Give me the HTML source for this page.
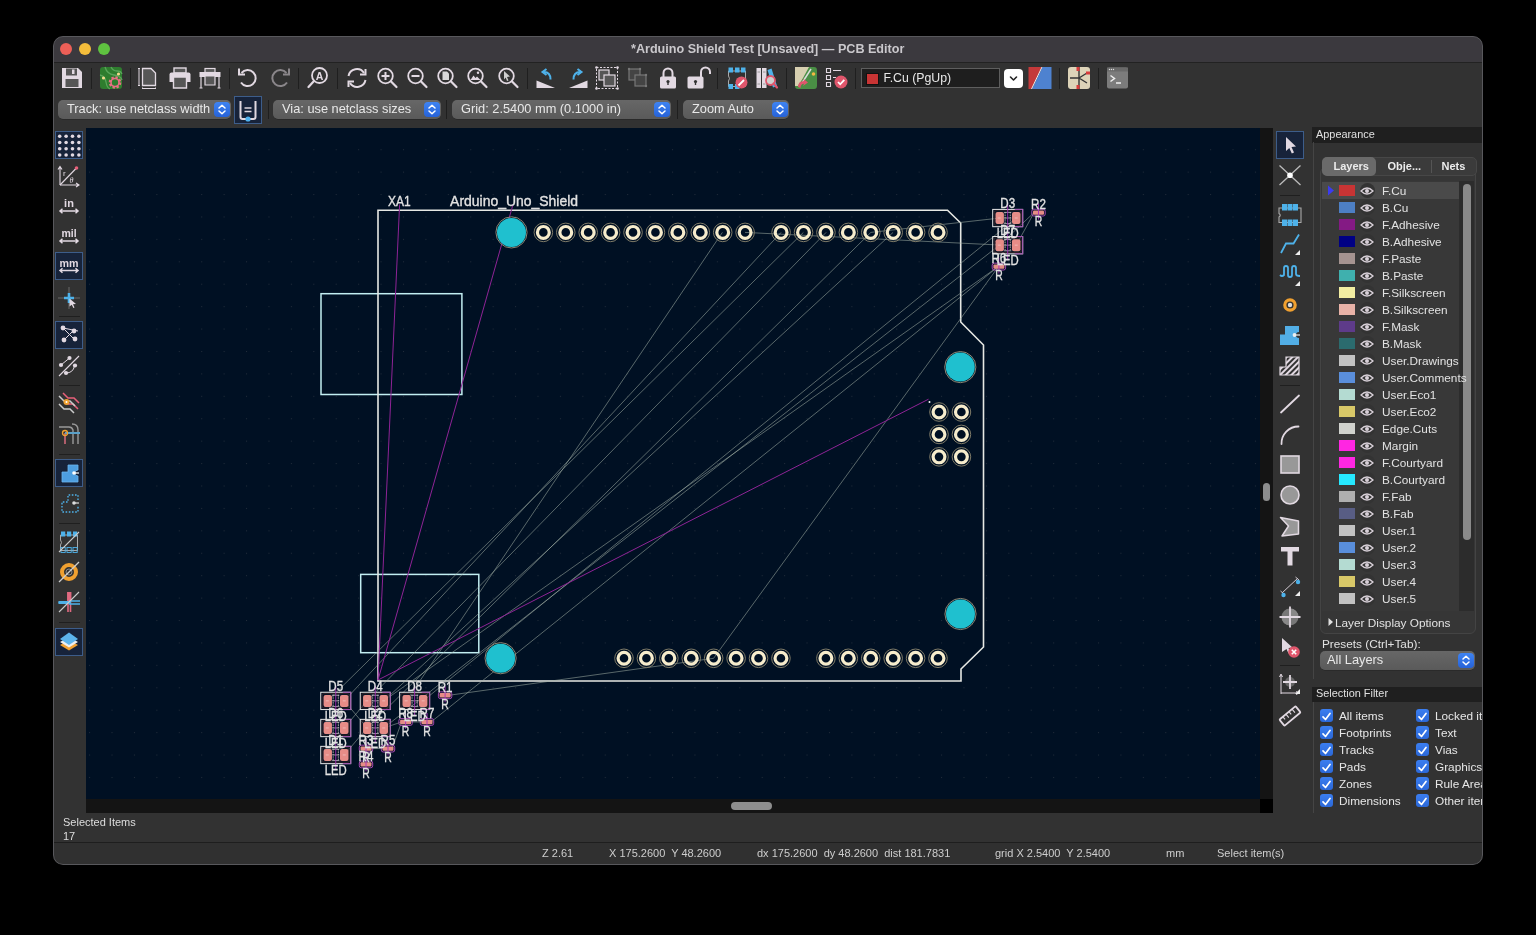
<!DOCTYPE html>
<html><head><meta charset="utf-8">
<style>
*{margin:0;padding:0;box-sizing:border-box}
html,body{width:1536px;height:935px;background:#000;overflow:hidden;font-family:"Liberation Sans",sans-serif;color:#dcdcdc}
.a{position:absolute}
#win{will-change:transform;position:absolute;left:0;top:0;width:1536px;height:935px;clip-path:inset(36px 53px 70px 53px round 10px);background:#323232}
.t{position:absolute;white-space:pre;line-height:1}
.sep{position:absolute;width:1px;background:#1f1f1f}
.hsep{position:absolute;height:1px;background:#1f1f1f}
.combo{position:absolute;height:19px;border-radius:5px;background:linear-gradient(#676767,#5a5a5a);box-shadow:0 0.5px 0.5px #222}
.combo span{position:absolute;left:9px;top:3px;font-size:12.8px;color:#e8e8e8;white-space:pre;line-height:1}
.step{position:absolute;top:2px;right:1px;width:16px;height:15px;border-radius:4px;background:linear-gradient(#3f84f2,#2662d8)}
.hl{position:absolute;background:#17233a;border:1px solid #3d5d8a}
.ln{position:absolute;left:1382px;font-size:11.8px;color:#e2e2e2;white-space:pre;line-height:1}
.sw{position:absolute;left:1339px;width:15.5px;height:11px}
.cb{position:absolute;width:13px;height:13px;border-radius:3px;background:linear-gradient(#3b7ef0,#2b68d8)}
.cbl{position:absolute;font-size:11.8px;color:#e6e6e6;white-space:pre;line-height:1}
.st{position:absolute;top:848px;font-size:11px;color:#cdcdcd;white-space:pre;line-height:1}
svg.a{overflow:visible}
.gs{will-change:transform}
</style></head><body>
<div id="win">
<div class="a" style="left:53px;top:36px;width:1430px;height:26.5px;background:#3b393e;border-bottom:1px solid #222"></div>
<div class="a" style="left:60px;top:43px;width:12px;height:12px;border-radius:6px;background:#ec5f57"></div>
<div class="a" style="left:79px;top:43px;width:12px;height:12px;border-radius:6px;background:#f4bd3b"></div>
<div class="a" style="left:98px;top:43px;width:12px;height:12px;border-radius:6px;background:#5fc240"></div>
<div class="t" style="left:631px;top:42.8px;font-size:12.6px;font-weight:bold;color:#cac8cc">*Arduino Shield Test [Unsaved] — PCB Editor</div>
<svg class="a" style="left:59.7px;top:66.0px" width="24" height="24" viewBox="0 0 24 24"><path d="M2 2 H18 L22 6 V22 H2 Z" fill="#e2d9e2"/><rect x="6" y="2.5" width="11" height="7" fill="#565656"/><rect x="12" y="3.5" width="2.5" height="4.5" fill="#e2d9e2"/><rect x="5.5" y="13" width="13" height="8" fill="#565656"/></svg>
<div class="sep" style="left:91.0px;top:68px;height:21px"></div>
<svg class="a" style="left:98.8px;top:66.0px" width="24" height="24" viewBox="0 0 24 24"><rect x="1" y="1" width="22" height="22" rx="3" fill="#2e7d2e"/><path d="M6 1 Q8 8 15 9 T23 14 M1 9 Q6 10 7 16 T11 23 M12 1 Q14 5 18 5 T23 8" fill="none" stroke="#5aa55a" stroke-width="1.3"/><circle cx="4.5" cy="12" r="1.6" fill="#f3d98c"/><circle cx="19.5" cy="8" r="1.6" fill="#f3d98c"/><circle cx="16" cy="16.5" r="5" fill="none" stroke="#ea6f85" stroke-width="2.6" stroke-dasharray="2.2 1.7"/><circle cx="16" cy="16.5" r="4" fill="none" stroke="#ea6f85" stroke-width="1.6"/></svg>
<div class="sep" style="left:129.5px;top:68px;height:21px"></div>
<svg class="a" style="left:136.0px;top:66.0px" width="24" height="24" viewBox="0 0 24 24"><path d="M6.5 2.5 H15 L19.5 7 V19.5 H6.5 Z" fill="#565656" stroke="#e2d9e2" stroke-width="1.3"/><path d="M3 2 V19.5 M2 2.5 H4 M2 19.5 H4 M6.5 22.5 H19.5 M6.5 21.5 V23 M19.5 21.5 V23" stroke="#e2d9e2" stroke-width="1"/></svg>
<svg class="a" style="left:167.5px;top:66.0px" width="24" height="24" viewBox="0 0 24 24"><rect x="6" y="2" width="12" height="5" fill="#565656" stroke="#e2d9e2" stroke-width="1.4"/><path d="M1.5 8.5 Q1.5 6.5 3.5 6.5 H20.5 Q22.5 6.5 22.5 8.5 V16 H1.5 Z" fill="#e2d9e2"/><path d="M5.5 11 H18.5 V22 H5.5 Z" fill="#565656" stroke="#e2d9e2" stroke-width="1.4"/></svg>
<svg class="a" style="left:198.0px;top:66.0px" width="24" height="24" viewBox="0 0 24 24"><rect x="7" y="2.5" width="10" height="4" fill="#565656" stroke="#e2d9e2" stroke-width="1.2"/><rect x="1.5" y="6" width="21" height="5" fill="#e2d9e2"/><path d="M7 10 H17 V19 H7 Z" fill="#565656" stroke="#e2d9e2" stroke-width="1.2"/><path d="M3 11 V22 M21 11 V22 M1.5 22 H4.5 M19.5 22 H22.5" stroke="#e2d9e2" stroke-width="1.2"/></svg>
<div class="sep" style="left:229.2px;top:68px;height:21px"></div>
<svg class="a" style="left:236.0px;top:66.0px" width="24" height="24" viewBox="0 0 24 24"><path d="M5.5 7 A8 8 0 1 1 5 16.5" fill="none" stroke="#e2d9e2" stroke-width="2"/><path d="M3 2.5 V8.5 H9" fill="none" stroke="#e2d9e2" stroke-width="2"/></svg>
<svg class="a" style="left:267.5px;top:66.0px" width="24" height="24" viewBox="0 0 24 24"><path d="M18.5 7 A8 8 0 1 0 19 16.5" fill="none" stroke="#8a868a" stroke-width="2"/><path d="M21 2.5 V8.5 H15" fill="none" stroke="#8a868a" stroke-width="2"/></svg>
<div class="sep" style="left:298.1px;top:68px;height:21px"></div>
<svg class="a" style="left:306.0px;top:66.0px" width="24" height="24" viewBox="0 0 24 24"><circle cx="13.5" cy="9.5" r="7.5" fill="none" stroke="#e2d9e2" stroke-width="1.8"/><path d="M8 15 L2.5 21" stroke="#e2d9e2" stroke-width="2.2" stroke-linecap="round"/><text x="13.5" y="13.5" font-size="10.5" font-weight="bold" text-anchor="middle" fill="#e2d9e2" font-family="Liberation Sans">A</text></svg>
<div class="sep" style="left:337.0px;top:68px;height:21px"></div>
<svg class="a" style="left:344.5px;top:66.0px" width="24" height="24" viewBox="0 0 24 24"><path d="M3.5 10 A8.5 8.5 0 0 1 19 7" fill="none" stroke="#e2d9e2" stroke-width="2"/><path d="M20.5 3 V8.5 H15" fill="none" stroke="#e2d9e2" stroke-width="2"/><path d="M20.5 14 A8.5 8.5 0 0 1 5 17" fill="none" stroke="#e2d9e2" stroke-width="2"/><path d="M3.5 21 V15.5 H9" fill="none" stroke="#e2d9e2" stroke-width="2"/></svg>
<svg class="a" style="left:374.5px;top:66.0px" width="24" height="24" viewBox="0 0 24 24"><circle cx="10.5" cy="10" r="7.3" fill="none" stroke="#e2d9e2" stroke-width="1.8"/><path d="M15.8 15.3 L21.5 21" stroke="#e2d9e2" stroke-width="2.2" stroke-linecap="round"/><path d="M6.5 10 H14.5 M10.5 6 V14" stroke="#e2d9e2" stroke-width="2"/></svg>
<svg class="a" style="left:404.5px;top:66.0px" width="24" height="24" viewBox="0 0 24 24"><circle cx="10.5" cy="10" r="7.3" fill="none" stroke="#e2d9e2" stroke-width="1.8"/><path d="M15.8 15.3 L21.5 21" stroke="#e2d9e2" stroke-width="2.2" stroke-linecap="round"/><path d="M6.5 10 H14.5" stroke="#e2d9e2" stroke-width="2"/></svg>
<svg class="a" style="left:434.5px;top:66.0px" width="24" height="24" viewBox="0 0 24 24"><circle cx="10.5" cy="10" r="7.3" fill="none" stroke="#e2d9e2" stroke-width="1.8"/><path d="M15.8 15.3 L21.5 21" stroke="#e2d9e2" stroke-width="2.2" stroke-linecap="round"/><path d="M7.5 5.5 H12 L14 7.5 V14 H7.5 Z" fill="#d8d8d8"/></svg>
<svg class="a" style="left:465.0px;top:66.0px" width="24" height="24" viewBox="0 0 24 24"><circle cx="10.5" cy="10" r="7.3" fill="none" stroke="#e2d9e2" stroke-width="1.8"/><path d="M15.8 15.3 L21.5 21" stroke="#e2d9e2" stroke-width="2.2" stroke-linecap="round"/><path d="M5.5 14 L8.5 9.5 L10.5 12 L12 10.5 L15.5 14 Z" fill="#e2d9e2"/><circle cx="13" cy="6.8" r="1.2" fill="#e2d9e2"/></svg>
<svg class="a" style="left:495.5px;top:66.0px" width="24" height="24" viewBox="0 0 24 24"><circle cx="10.5" cy="10" r="7.3" fill="none" stroke="#e2d9e2" stroke-width="1.8"/><path d="M15.8 15.3 L21.5 21" stroke="#e2d9e2" stroke-width="2.2" stroke-linecap="round"/><path d="M8 5 L14 10.5 L11 11 L12.5 14.5 L11 15 L9.7 11.6 L8 13.5 Z" fill="#cfcfcf"/></svg>
<div class="sep" style="left:526.8px;top:68px;height:21px"></div>
<svg class="a" style="left:534.5px;top:66.0px" width="24" height="24" viewBox="0 0 24 24"><path d="M1.5 22 L1.5 14.5 L20 22 Z" fill="#e2d9e2"/><path d="M15.5 13.5 Q15.5 6 9 6" fill="none" stroke="#4eb2ea" stroke-width="2"/><path d="M11.5 3 L7.5 6 L11.5 9" fill="none" stroke="#4eb2ea" stroke-width="2"/></svg>
<svg class="a" style="left:565.0px;top:66.0px" width="24" height="24" viewBox="0 0 24 24"><path d="M22.5 22 L22.5 14.5 L4 22 Z" fill="#e2d9e2"/><path d="M8.5 13.5 Q8.5 6 15 6" fill="none" stroke="#4eb2ea" stroke-width="2"/><path d="M12.5 3 L16.5 6 L12.5 9" fill="none" stroke="#4eb2ea" stroke-width="2"/></svg>
<svg class="a" style="left:595.3px;top:66.0px" width="24" height="24" viewBox="0 0 24 24"><rect x="1.5" y="1.5" width="21" height="21" fill="none" stroke="#e2d9e2" stroke-width="1" stroke-dasharray="2 1.5"/><rect x="4" y="4" width="10" height="10" fill="#565656" stroke="#e2d9e2" stroke-width="1.2"/><rect x="9" y="9" width="11" height="11" fill="#565656" stroke="#e2d9e2" stroke-width="1.2"/><circle cx="1.5" cy="1.5" r="1.3" fill="#e2d9e2"/><circle cx="22.5" cy="1.5" r="1.3" fill="#e2d9e2"/><circle cx="1.5" cy="22.5" r="1.3" fill="#e2d9e2"/><circle cx="22.5" cy="22.5" r="1.3" fill="#e2d9e2"/></svg>
<svg class="a" style="left:625.7px;top:66.0px" width="24" height="24" viewBox="0 0 24 24"><rect x="3" y="3" width="11" height="11" fill="#444" stroke="#777" stroke-width="1.2"/><rect x="9" y="9" width="11" height="11" fill="#444" stroke="#777" stroke-width="1.2"/><circle cx="3" cy="3" r="1.2" fill="#777"/><circle cx="14" cy="3" r="1.2" fill="#777"/><circle cx="20" cy="20" r="1.2" fill="#777"/><circle cx="20" cy="9" r="1.2" fill="#777"/></svg>
<svg class="a" style="left:656.0px;top:66.0px" width="24" height="24" viewBox="0 0 24 24"><path d="M7.5 11 V7 A4.5 4.5 0 0 1 16.5 7 V11" fill="none" stroke="#e2d9e2" stroke-width="2"/><rect x="4" y="10.5" width="16" height="12" rx="1.5" fill="#e2d9e2"/><circle cx="12" cy="15.5" r="1.6" fill="#333"/><rect x="11.3" y="15.5" width="1.4" height="3.5" fill="#333"/></svg>
<svg class="a" style="left:686.0px;top:66.0px" width="24" height="24" viewBox="0 0 24 24"><path d="M15 11 V6 A4.5 4.5 0 0 1 24 6 V8" fill="none" stroke="#e2d9e2" stroke-width="2"/><rect x="1.5" y="10.5" width="16" height="12" rx="1.5" fill="#e2d9e2"/><circle cx="9.5" cy="15.5" r="1.6" fill="#333"/><rect x="8.8" y="15.5" width="1.4" height="3.5" fill="#333"/></svg>
<div class="sep" style="left:716.8px;top:68px;height:21px"></div>
<svg class="a" style="left:724.8px;top:66.0px" width="24" height="24" viewBox="0 0 24 24"><path d="M3.5 5 H20.5 V20.5 H3.5 V15 Q5.5 12.5 3.5 10 Z" fill="none" stroke="#aaa" stroke-width="1"/><rect x="3.5" y="1.5" width="4.5" height="5" fill="#4eb2ea"/><rect x="10" y="1.5" width="4.5" height="5" fill="#4eb2ea"/><rect x="16" y="1.5" width="4.5" height="5" fill="#4eb2ea"/><rect x="3.5" y="18" width="4.5" height="5" fill="#4eb2ea"/><rect x="10" y="18" width="4.5" height="5" fill="#4eb2ea"/><circle cx="16.5" cy="16.5" r="6" fill="#e0566c"/><path d="M13.5 19.5 L19 14" stroke="#fff" stroke-width="1.8"/></svg>
<svg class="a" style="left:755.2px;top:66.0px" width="24" height="24" viewBox="0 0 24 24"><rect x="1.5" y="2" width="4.5" height="20" fill="#e2d9e2"/><rect x="7" y="2" width="4.5" height="20" fill="#e2d9e2"/><path d="M2.5 6 H5 M2.5 18 H5 M8 6 H10.5 M8 18 H10.5" stroke="#888" stroke-width="0.8"/><path d="M12.5 4 L16.5 2.5 L22 20 L18 21.5 Z" fill="#4eb2ea"/><circle cx="15.5" cy="14.5" r="4.5" fill="#cfcfcf" stroke="#e0566c" stroke-width="1.8"/><path d="M18.5 17.5 L22 21.5" stroke="#e0566c" stroke-width="2.2" stroke-linecap="round"/></svg>
<div class="sep" style="left:785.8px;top:68px;height:21px"></div>
<svg class="a" style="left:793.6px;top:66.0px" width="24" height="24" viewBox="0 0 24 24"><rect x="1" y="1" width="22" height="22" rx="3" fill="#4a8f45"/><path d="M1 1 H15 L9 12 L4 20 L1 20 Z" fill="#d7cfb0"/><path d="M17 3 L8 17" stroke="#ddd" stroke-width="1.5"/><circle cx="19.5" cy="8" r="1.8" fill="#f4b942"/><path d="M4 21 Q4 15 10 15 L9 12.5 L14 16.5 L9 20 L10 17.8 Q6.5 18 6.5 22" fill="#e0566c"/></svg>
<svg class="a" style="left:824.5px;top:66.0px" width="24" height="24" viewBox="0 0 24 24"><path d="M1.5 2.5 H5.5 V6.5 H1.5 Z M1.5 9.5 H5.5 V13.5 H1.5 Z M1.5 16.5 H5.5 V20.5 H1.5 Z" fill="none" stroke="#e2d9e2" stroke-width="1.1"/><path d="M8 4.5 H16 M8 11.5 H11" stroke="#e2d9e2" stroke-width="1.2"/><circle cx="16" cy="16" r="6.5" fill="#e0566c"/><path d="M13 16 L15.2 18.3 L19.3 13.8" fill="none" stroke="#fff" stroke-width="1.8"/></svg>
<div class="sep" style="left:855.0px;top:68px;height:21px"></div>
<svg class="a" style="left:1028.3px;top:66.0px" width="24" height="24" viewBox="0 0 24 24"><path d="M0.5 1 H14 L3.5 23 H0.5 Z" fill="#c4393a"/><path d="M14.5 1 H23.5 V23 H4 Z" fill="#4e82d0"/><path d="M14 1 L3.5 23" stroke="#eee" stroke-width="1"/></svg>
<div class="sep" style="left:1058.5px;top:68px;height:21px"></div>
<svg class="a" style="left:1067.0px;top:66.0px" width="24" height="24" viewBox="0 0 24 24"><rect x="1" y="1" width="22" height="22" rx="3" fill="#ddd3b8"/><path d="M12 1 V23 M12 12 L20 7 M12 12 L20 17 M3 12 H12" stroke="#333" stroke-width="1.4"/><rect x="9.5" y="1" width="3" height="4" fill="#d73b3b"/><rect x="9.5" y="19" width="3" height="4" fill="#d73b3b"/><rect x="19" y="5.5" width="4" height="3" fill="#d73b3b"/></svg>
<div class="sep" style="left:1097.5px;top:68px;height:21px"></div>
<svg class="a" style="left:1106.0px;top:66.0px" width="24" height="24" viewBox="0 0 24 24"><rect x="1" y="1.5" width="21" height="21" rx="2" fill="#7c7c7c"/><rect x="1" y="1.5" width="21" height="4" fill="#6a6a6a"/><circle cx="3.5" cy="3.5" r="0.7" fill="#ddd"/><circle cx="5.5" cy="3.5" r="0.7" fill="#ddd"/><circle cx="7.5" cy="3.5" r="0.7" fill="#ddd"/><path d="M4.5 9.5 L8.5 12.5 L4.5 15.5 M10 17 H15" fill="none" stroke="#eee" stroke-width="1.5"/></svg>
<div class="a" style="left:861px;top:68px;width:139px;height:20px;background:#1e1e1e;border:1px solid #5e5e5e"></div>
<div class="a" style="left:866px;top:73px;width:12.5px;height:11.5px;background:#c83434;border:0.5px solid #111"></div>
<div class="t" style="left:883.5px;top:72.3px;font-size:12.3px;color:#e8e8e8">F.Cu (PgUp)</div>
<div class="a" style="left:1004px;top:69px;width:19px;height:19px;border-radius:4px;background:#fff"></div>
<svg class="a" style="left:1004px;top:69px" width="19" height="19" viewBox="0 0 19 19"><path d="M6.5 8 L9.5 11 L12.5 8" fill="none" stroke="#222" stroke-width="1.6" stroke-linecap="round" stroke-linejoin="round"/></svg>
<div class="combo" style="left:58px;top:100px;width:173px"><span>Track: use netclass width</span><div class="step"><svg width="16" height="15" viewBox="0 0 16 15"><path d="M5 6 L8 3.2 L11 6 M5 9 L8 11.8 L11 9" fill="none" stroke="#fff" stroke-width="1.5" stroke-linecap="round" stroke-linejoin="round"/></svg></div></div>
<div class="hl" style="left:234px;top:96px;width:28px;height:28px"></div>
<svg class="a" style="left:234px;top:96px" width="28" height="28" viewBox="0 0 28 28"><path d="M6.5 5 V21 Q6.5 23 8.5 23 H19.5 Q21.5 23 21.5 21 V5" fill="none" stroke="#e0d8e0" stroke-width="2"/><path d="M10.5 12 H17.5 M10.5 15.5 H17.5" stroke="#e0d8e0" stroke-width="1.6"/><circle cx="14" cy="23" r="2.6" fill="#4fb3f0"/></svg>
<div class="sep" style="left:268px;top:100px;height:19px"></div>
<div class="combo" style="left:273px;top:100px;width:168px"><span>Via: use netclass sizes</span><div class="step"><svg width="16" height="15" viewBox="0 0 16 15"><path d="M5 6 L8 3.2 L11 6 M5 9 L8 11.8 L11 9" fill="none" stroke="#fff" stroke-width="1.5" stroke-linecap="round" stroke-linejoin="round"/></svg></div></div>
<div class="sep" style="left:446px;top:100px;height:19px"></div>
<div class="combo" style="left:452px;top:100px;width:219px"><span>Grid: 2.5400 mm (0.1000 in)</span><div class="step"><svg width="16" height="15" viewBox="0 0 16 15"><path d="M5 6 L8 3.2 L11 6 M5 9 L8 11.8 L11 9" fill="none" stroke="#fff" stroke-width="1.5" stroke-linecap="round" stroke-linejoin="round"/></svg></div></div>
<div class="sep" style="left:677px;top:100px;height:19px"></div>
<div class="combo" style="left:683px;top:100px;width:106px"><span>Zoom Auto</span><div class="step"><svg width="16" height="15" viewBox="0 0 16 15"><path d="M5 6 L8 3.2 L11 6 M5 9 L8 11.8 L11 9" fill="none" stroke="#fff" stroke-width="1.5" stroke-linecap="round" stroke-linejoin="round"/></svg></div></div>
<div class="hl" style="left:54.5px;top:131px;width:28.5px;height:28px"></div>
<svg class="a" style="left:56.7px;top:133.0px" width="24" height="24" viewBox="0 0 24 24"><circle cx="2.7" cy="3.3" r="1.8" fill="#e2d9e2"/><circle cx="2.7" cy="9.55" r="1.8" fill="#e2d9e2"/><circle cx="2.7" cy="15.8" r="1.8" fill="#e2d9e2"/><circle cx="2.7" cy="22.05" r="1.8" fill="#e2d9e2"/><circle cx="9.100000000000001" cy="3.3" r="1.8" fill="#e2d9e2"/><circle cx="9.100000000000001" cy="9.55" r="1.8" fill="#e2d9e2"/><circle cx="9.100000000000001" cy="15.8" r="1.8" fill="#e2d9e2"/><circle cx="9.100000000000001" cy="22.05" r="1.8" fill="#e2d9e2"/><circle cx="15.5" cy="3.3" r="1.8" fill="#e2d9e2"/><circle cx="15.5" cy="9.55" r="1.8" fill="#e2d9e2"/><circle cx="15.5" cy="15.8" r="1.8" fill="#e2d9e2"/><circle cx="15.5" cy="22.05" r="1.8" fill="#e2d9e2"/><circle cx="21.900000000000002" cy="3.3" r="1.8" fill="#e2d9e2"/><circle cx="21.900000000000002" cy="9.55" r="1.8" fill="#e2d9e2"/><circle cx="21.900000000000002" cy="15.8" r="1.8" fill="#e2d9e2"/><circle cx="21.900000000000002" cy="22.05" r="1.8" fill="#e2d9e2"/></svg>
<svg class="a" style="left:56.7px;top:164.0px" width="24" height="24" viewBox="0 0 24 24"><path d="M3 21 V3 M1 5.5 L3 2.5 L5 5.5 M3 21 H22 M19 19 L22 21 L19 23" fill="none" stroke="#e2d9e2" stroke-width="1.1"/><path d="M3 21 L19 4.5" stroke="#e2d9e2" stroke-width="1.1"/><circle cx="19.5" cy="4" r="1.8" fill="#e8607a"/><text x="6" y="12" font-size="8" fill="#e2d9e2" font-family="Liberation Sans">r</text><text x="12.5" y="18.5" font-size="8" font-style="italic" fill="#e2d9e2" font-family="Liberation Serif">θ</text></svg>
<svg class="a" style="left:56.7px;top:194.0px" width="24" height="24" viewBox="0 0 24 24"><text x="12" y="13" font-size="11" font-weight="bold" text-anchor="middle" fill="#e2d9e2" font-family="Liberation Sans">in</text><path d="M3 17 H21 M5.5 14.8 L3 17 L5.5 19.2 M18.5 14.8 L21 17 L18.5 19.2" fill="none" stroke="#e2d9e2" stroke-width="1.5"/></svg>
<svg class="a" style="left:56.7px;top:224.0px" width="24" height="24" viewBox="0 0 24 24"><text x="12" y="13" font-size="10.5" font-weight="bold" text-anchor="middle" fill="#e2d9e2" font-family="Liberation Sans">mil</text><path d="M3 17 H21 M5.5 14.8 L3 17 L5.5 19.2 M18.5 14.8 L21 17 L18.5 19.2" fill="none" stroke="#e2d9e2" stroke-width="1.5"/></svg>
<div class="hl" style="left:54.5px;top:252px;width:28.5px;height:28px"></div>
<svg class="a" style="left:56.7px;top:254.0px" width="24" height="24" viewBox="0 0 24 24"><text x="12" y="12.5" font-size="10.5" font-weight="bold" text-anchor="middle" fill="#e2d9e2" font-family="Liberation Sans" textLength="19" lengthAdjust="spacingAndGlyphs">mm</text><path d="M3 16.5 H21 M5.5 14.3 L3 16.5 L5.5 18.7 M18.5 14.3 L21 16.5 L18.5 18.7" fill="none" stroke="#e2d9e2" stroke-width="1.5"/></svg>
<svg class="a" style="left:56.7px;top:285.5px" width="24" height="24" viewBox="0 0 24 24"><path d="M12 1 V23 M1 12 H23" stroke="#777" stroke-width="0.8"/><path d="M12 7 V17 M7 12 H17" stroke="#4eb2ea" stroke-width="2.6"/><path d="M12.5 12.5 L19 18 L16 18.3 L17.5 21.5 L16.3 22 L14.8 18.8 L12.5 20.5 Z" fill="#e2d9e2"/></svg>
<div class="hsep" style="left:59px;top:315.5px;width:21px"></div>
<div class="hl" style="left:54.5px;top:321px;width:28.5px;height:28px"></div>
<svg class="a" style="left:56.7px;top:323.0px" width="24" height="24" viewBox="0 0 24 24"><path d="M6 5 L17 16 M17 7 L7 17 M6 5 L21 8" stroke="#e2d9e2" stroke-width="1"/><circle cx="6" cy="5" r="2.4" fill="#e2d9e2"/><circle cx="17" cy="8" r="2.4" fill="#e2d9e2"/><circle cx="7" cy="17" r="2.4" fill="#e2d9e2"/><circle cx="18" cy="16" r="2.4" fill="#e2d9e2"/></svg>
<svg class="a" style="left:56.7px;top:353.5px" width="24" height="24" viewBox="0 0 24 24"><path d="M2 22 L22 2" stroke="#e2d9e2" stroke-width="1.1"/><path d="M4 11 L12.5 4" stroke="#e2d9e2" stroke-width="1"/><path d="M9 19 Q16 19 17.5 12" fill="none" stroke="#e2d9e2" stroke-width="1"/><circle cx="4" cy="11" r="2.1" fill="#e2d9e2"/><circle cx="12.5" cy="4" r="2.1" fill="#e2d9e2"/><circle cx="9" cy="19" r="2.1" fill="#e2d9e2"/><circle cx="18" cy="11.5" r="2.1" fill="#e2d9e2"/></svg>
<div class="hsep" style="left:59px;top:384.5px;width:21px"></div>
<svg class="a" style="left:56.7px;top:391.0px" width="24" height="24" viewBox="0 0 24 24"><path d="M6 2 L11 7 H17 L22 12" fill="none" stroke="#e8607a" stroke-width="1.5"/><path d="M8 10 L11 13 H16 L21 18" fill="none" stroke="#e8607a" stroke-width="1.5"/><path d="M2 5 L7 10 H13 L18 15" fill="none" stroke="#ccc" stroke-width="1.5"/><path d="M2 13 L7 18 H13 L17 22" fill="none" stroke="#ccc" stroke-width="1.5"/><circle cx="9.5" cy="11" r="3" fill="#f0a030"/><circle cx="9.5" cy="11" r="1" fill="#fff"/></svg>
<svg class="a" style="left:56.7px;top:422.0px" width="24" height="24" viewBox="0 0 24 24"><path d="M2 5 H12 Q15 5 16 8 V22" fill="none" stroke="#999" stroke-width="1.4"/><path d="M15 2 Q21 2 21 8 V22" fill="none" stroke="#999" stroke-width="1.4"/><path d="M8 11 V22" stroke="#d06878" stroke-width="1.6"/><path d="M8 11 H23" stroke="#5aa0c8" stroke-width="2"/><circle cx="8" cy="11" r="2.5" fill="none" stroke="#f0a030" stroke-width="1.3"/></svg>
<div class="hsep" style="left:59px;top:453.5px;width:21px"></div>
<div class="hl" style="left:54.5px;top:458.5px;width:28.5px;height:28px"></div>
<svg class="a" style="left:56.7px;top:460.5px" width="24" height="24" viewBox="0 0 24 24"><path d="M5 21 V11 H11 V4 H21 V9 A3 3 0 0 0 21 15 V21 Z" fill="#4d9ee0" stroke="#6cb4ee" stroke-width="0.8"/><circle cx="17" cy="12" r="1.8" fill="#fff"/><path d="M17 12 H22" stroke="#fff" stroke-width="1.2"/></svg>
<svg class="a" style="left:56.7px;top:491.0px" width="24" height="24" viewBox="0 0 24 24"><path d="M21 9 V4 H11 V11 H5 V21 H21 V15" fill="none" stroke="#4eb2ea" stroke-width="1.4" stroke-dasharray="1.6 1.6"/><circle cx="17" cy="12" r="1.8" fill="#ddd"/><path d="M17 12 H22" stroke="#ddd" stroke-width="1.2"/></svg>
<div class="hsep" style="left:59px;top:522.5px;width:21px"></div>
<svg class="a" style="left:56.7px;top:530.0px" width="24" height="24" viewBox="0 0 24 24"><path d="M3.5 5 H20.5 V20.5 H3.5 V15 Q5.5 12.5 3.5 10 Z" fill="none" stroke="#aaa" stroke-width="1"/><rect x="4" y="1.5" width="4.2" height="5" fill="#4eb2ea"/><rect x="10" y="1.5" width="4.2" height="5" fill="#4eb2ea"/><rect x="16" y="1.5" width="4.2" height="5" fill="#4eb2ea"/><rect x="4" y="17.5" width="4.2" height="5" fill="none" stroke="#4eb2ea" stroke-width="0.9"/><rect x="10" y="17.5" width="4.2" height="5" fill="none" stroke="#4eb2ea" stroke-width="0.9"/><rect x="16" y="17.5" width="4.2" height="5" fill="none" stroke="#4eb2ea" stroke-width="0.9"/><path d="M2 22 L22 2" stroke="#ccc" stroke-width="1.1"/></svg>
<svg class="a" style="left:56.7px;top:560.0px" width="24" height="24" viewBox="0 0 24 24"><circle cx="12" cy="12" r="7" fill="none" stroke="#f0a030" stroke-width="4"/><circle cx="12" cy="12" r="3" fill="none" stroke="#888" stroke-width="1"/><path d="M2 22 L22 2" stroke="#ccc" stroke-width="1.2"/></svg>
<svg class="a" style="left:56.7px;top:590.0px" width="24" height="24" viewBox="0 0 24 24"><path d="M11 2 V22 M13.5 2 V22" stroke="#e06a80" stroke-width="1.6"/><rect x="10.2" y="2" width="4" height="10" fill="#e06a80"/><path d="M1.5 12.5 H14 M12 11 H23 M12 14 H23" stroke="#4eb2ea" stroke-width="1.3"/><rect x="1.5" y="11" width="11" height="3" fill="#4eb2ea"/><path d="M2 22 L22 2" stroke="#ccc" stroke-width="1.1"/></svg>
<div class="hsep" style="left:59px;top:622.0px;width:21px"></div>
<div class="hl" style="left:54.5px;top:627.5px;width:28.5px;height:28px"></div>
<svg class="a" style="left:56.7px;top:629.5px" width="24" height="24" viewBox="0 0 24 24"><path d="M12 10 L21 15 L12 20.5 L3 15 Z" fill="#f0a030"/><path d="M12 7 L21 12 L12 17.5 L3 12 Z" fill="#eee"/><path d="M12 2.5 L21 9 L12 15 L3 9 Z" fill="#5cb4ec"/></svg>
<svg class="a gs" style="left:86px;top:128px" width="1174" height="671" viewBox="86 128 1174 671" font-family="Liberation Sans, sans-serif">
<defs><pattern id="grid" x="89.1" y="149.2" width="22.42" height="22.42" patternUnits="userSpaceOnUse"><rect x="-1" y="-1" width="2" height="2" fill="#222c3a"/></pattern></defs>
<rect x="86" y="128" width="1174" height="671" fill="#001023"/>
<rect x="86" y="128" width="1174" height="671" fill="url(#grid)"/>
<rect x="321" y="293.7" width="140.9" height="100.8" fill="none" stroke="#c2eef2" stroke-width="1.5"/>
<rect x="360.7" y="574.4" width="118.1" height="78.3" fill="none" stroke="#c2eef2" stroke-width="1.5"/>
<path d="M378 210.2 L947.5 210.2 L960.7 223 L960.7 322 L983.5 345 L983.5 647 L961 669 L961 681 L378 681 Z" fill="none" stroke="#e6e8e4" stroke-width="1.6"/>
<line x1="722.4" y1="232.4" x2="406.45" y2="700.85" stroke="#a3b2a8" stroke-width="0.9" stroke-opacity="0.6"/>
<line x1="781.1" y1="232.4" x2="344.25" y2="700.85" stroke="#a3b2a8" stroke-width="0.9" stroke-opacity="0.6"/>
<line x1="803.4" y1="232.4" x2="327.55" y2="700.85" stroke="#a3b2a8" stroke-width="0.9" stroke-opacity="0.6"/>
<line x1="826.1" y1="232.4" x2="367.05" y2="700.85" stroke="#a3b2a8" stroke-width="0.9" stroke-opacity="0.6"/>
<line x1="870.9" y1="232.4" x2="367.05" y2="727.95" stroke="#a3b2a8" stroke-width="0.9" stroke-opacity="0.6"/>
<line x1="893.1" y1="232.4" x2="383.75" y2="700.85" stroke="#a3b2a8" stroke-width="0.9" stroke-opacity="0.6"/>
<line x1="745.0" y1="232.4" x2="999.5" y2="245.05" stroke="#a3b2a8" stroke-width="0.9" stroke-opacity="0.6"/>
<line x1="870.9" y1="232.4" x2="999.4" y2="218.1" stroke="#a3b2a8" stroke-width="0.9" stroke-opacity="0.6"/>
<line x1="1016.3" y1="218.1" x2="423.15" y2="700.85" stroke="#a3b2a8" stroke-width="0.9" stroke-opacity="0.6"/>
<line x1="999.5" y1="245.05" x2="383.75" y2="727.95" stroke="#a3b2a8" stroke-width="0.9" stroke-opacity="0.6"/>
<line x1="998.7" y1="266.25" x2="383.75" y2="700.85" stroke="#a3b2a8" stroke-width="0.9" stroke-opacity="0.6"/>
<line x1="998.7" y1="266.25" x2="713.6" y2="658.3" stroke="#a3b2a8" stroke-width="0.9" stroke-opacity="0.6"/>
<line x1="998.7" y1="266.25" x2="431" y2="722" stroke="#a3b2a8" stroke-width="0.9" stroke-opacity="0.6"/>
<line x1="449.1" y1="695.25" x2="713.6" y2="658.3" stroke="#a3b2a8" stroke-width="0.9" stroke-opacity="0.6"/>
<line x1="1034.2" y1="212.45" x2="1016.3" y2="245.05" stroke="#a3b2a8" stroke-width="0.9" stroke-opacity="0.6"/>
<line x1="1034.2" y1="212.45" x2="999.5" y2="245.05" stroke="#a3b2a8" stroke-width="0.9" stroke-opacity="0.6"/>
<line x1="344.25" y1="700.85" x2="367.05" y2="727.95" stroke="#a3b2a8" stroke-width="0.9" stroke-opacity="0.6"/>
<line x1="344.25" y1="727.95" x2="367.05" y2="700.85" stroke="#a3b2a8" stroke-width="0.9" stroke-opacity="0.6"/>
<line x1="344.25" y1="754.95" x2="367.05" y2="727.95" stroke="#a3b2a8" stroke-width="0.9" stroke-opacity="0.6"/>
<line x1="370" y1="748.6" x2="384" y2="748.6" stroke="#a3b2a8" stroke-width="0.9" stroke-opacity="0.6"/>
<line x1="409.6" y1="722" x2="423" y2="722" stroke="#a3b2a8" stroke-width="0.9" stroke-opacity="0.6"/>
<line x1="383.75" y1="727.95" x2="401.6" y2="722" stroke="#a3b2a8" stroke-width="0.9" stroke-opacity="0.6"/>
<line x1="392" y1="748.6" x2="401.6" y2="722" stroke="#a3b2a8" stroke-width="0.9" stroke-opacity="0.6"/>
<line x1="378" y1="680" x2="399.6" y2="204.4" stroke="#8e2496" stroke-width="1"/>
<line x1="378" y1="680" x2="513" y2="204.4" stroke="#8e2496" stroke-width="1"/>
<line x1="378" y1="680" x2="928.5" y2="399.2" stroke="#8e2496" stroke-width="1"/>
<circle cx="929.5" cy="402" r="1" fill="#fff"/>
<circle cx="511.5" cy="232.4" r="15.6" fill="none" stroke="#8c8673" stroke-width="1"/>
<circle cx="511.5" cy="232.4" r="14.5" fill="#1fc0cf"/>
<circle cx="960.3" cy="367.1" r="15.6" fill="none" stroke="#8c8673" stroke-width="1"/>
<circle cx="960.3" cy="367.1" r="14.5" fill="#1fc0cf"/>
<circle cx="960.5" cy="614" r="15.6" fill="none" stroke="#8c8673" stroke-width="1"/>
<circle cx="960.5" cy="614" r="14.5" fill="#1fc0cf"/>
<circle cx="500.6" cy="658.2" r="15.6" fill="none" stroke="#8c8673" stroke-width="1"/>
<circle cx="500.6" cy="658.2" r="14.5" fill="#1fc0cf"/>
<circle cx="543.35" cy="232.40" r="9.3" fill="none" stroke="#7f7b68" stroke-width="1"/>
<circle cx="543.35" cy="232.40" r="5.9" fill="none" stroke="#f6eccc" stroke-width="3.2"/>
<circle cx="565.77" cy="232.40" r="9.3" fill="none" stroke="#7f7b68" stroke-width="1"/>
<circle cx="565.77" cy="232.40" r="5.9" fill="none" stroke="#f6eccc" stroke-width="3.2"/>
<circle cx="588.19" cy="232.40" r="9.3" fill="none" stroke="#7f7b68" stroke-width="1"/>
<circle cx="588.19" cy="232.40" r="5.9" fill="none" stroke="#f6eccc" stroke-width="3.2"/>
<circle cx="610.61" cy="232.40" r="9.3" fill="none" stroke="#7f7b68" stroke-width="1"/>
<circle cx="610.61" cy="232.40" r="5.9" fill="none" stroke="#f6eccc" stroke-width="3.2"/>
<circle cx="633.03" cy="232.40" r="9.3" fill="none" stroke="#7f7b68" stroke-width="1"/>
<circle cx="633.03" cy="232.40" r="5.9" fill="none" stroke="#f6eccc" stroke-width="3.2"/>
<circle cx="655.45" cy="232.40" r="9.3" fill="none" stroke="#7f7b68" stroke-width="1"/>
<circle cx="655.45" cy="232.40" r="5.9" fill="none" stroke="#f6eccc" stroke-width="3.2"/>
<circle cx="677.87" cy="232.40" r="9.3" fill="none" stroke="#7f7b68" stroke-width="1"/>
<circle cx="677.87" cy="232.40" r="5.9" fill="none" stroke="#f6eccc" stroke-width="3.2"/>
<circle cx="700.29" cy="232.40" r="9.3" fill="none" stroke="#7f7b68" stroke-width="1"/>
<circle cx="700.29" cy="232.40" r="5.9" fill="none" stroke="#f6eccc" stroke-width="3.2"/>
<circle cx="722.71" cy="232.40" r="9.3" fill="none" stroke="#7f7b68" stroke-width="1"/>
<circle cx="722.71" cy="232.40" r="5.9" fill="none" stroke="#f6eccc" stroke-width="3.2"/>
<circle cx="745.13" cy="232.40" r="9.3" fill="none" stroke="#7f7b68" stroke-width="1"/>
<circle cx="745.13" cy="232.40" r="5.9" fill="none" stroke="#f6eccc" stroke-width="3.2"/>
<circle cx="781.10" cy="232.40" r="9.3" fill="none" stroke="#7f7b68" stroke-width="1"/>
<circle cx="781.10" cy="232.40" r="5.9" fill="none" stroke="#f6eccc" stroke-width="3.2"/>
<circle cx="803.52" cy="232.40" r="9.3" fill="none" stroke="#7f7b68" stroke-width="1"/>
<circle cx="803.52" cy="232.40" r="5.9" fill="none" stroke="#f6eccc" stroke-width="3.2"/>
<circle cx="825.94" cy="232.40" r="9.3" fill="none" stroke="#7f7b68" stroke-width="1"/>
<circle cx="825.94" cy="232.40" r="5.9" fill="none" stroke="#f6eccc" stroke-width="3.2"/>
<circle cx="848.36" cy="232.40" r="9.3" fill="none" stroke="#7f7b68" stroke-width="1"/>
<circle cx="848.36" cy="232.40" r="5.9" fill="none" stroke="#f6eccc" stroke-width="3.2"/>
<circle cx="870.78" cy="232.40" r="9.3" fill="none" stroke="#7f7b68" stroke-width="1"/>
<circle cx="870.78" cy="232.40" r="5.9" fill="none" stroke="#f6eccc" stroke-width="3.2"/>
<circle cx="893.20" cy="232.40" r="9.3" fill="none" stroke="#7f7b68" stroke-width="1"/>
<circle cx="893.20" cy="232.40" r="5.9" fill="none" stroke="#f6eccc" stroke-width="3.2"/>
<circle cx="915.62" cy="232.40" r="9.3" fill="none" stroke="#7f7b68" stroke-width="1"/>
<circle cx="915.62" cy="232.40" r="5.9" fill="none" stroke="#f6eccc" stroke-width="3.2"/>
<circle cx="938.04" cy="232.40" r="9.3" fill="none" stroke="#7f7b68" stroke-width="1"/>
<circle cx="938.04" cy="232.40" r="5.9" fill="none" stroke="#f6eccc" stroke-width="3.2"/>
<circle cx="624.00" cy="658.30" r="9.3" fill="none" stroke="#7f7b68" stroke-width="1"/>
<circle cx="624.00" cy="658.30" r="5.9" fill="none" stroke="#f6eccc" stroke-width="3.2"/>
<circle cx="646.42" cy="658.30" r="9.3" fill="none" stroke="#7f7b68" stroke-width="1"/>
<circle cx="646.42" cy="658.30" r="5.9" fill="none" stroke="#f6eccc" stroke-width="3.2"/>
<circle cx="668.84" cy="658.30" r="9.3" fill="none" stroke="#7f7b68" stroke-width="1"/>
<circle cx="668.84" cy="658.30" r="5.9" fill="none" stroke="#f6eccc" stroke-width="3.2"/>
<circle cx="691.26" cy="658.30" r="9.3" fill="none" stroke="#7f7b68" stroke-width="1"/>
<circle cx="691.26" cy="658.30" r="5.9" fill="none" stroke="#f6eccc" stroke-width="3.2"/>
<circle cx="713.68" cy="658.30" r="9.3" fill="none" stroke="#7f7b68" stroke-width="1"/>
<circle cx="713.68" cy="658.30" r="5.9" fill="none" stroke="#f6eccc" stroke-width="3.2"/>
<circle cx="736.10" cy="658.30" r="9.3" fill="none" stroke="#7f7b68" stroke-width="1"/>
<circle cx="736.10" cy="658.30" r="5.9" fill="none" stroke="#f6eccc" stroke-width="3.2"/>
<circle cx="758.52" cy="658.30" r="9.3" fill="none" stroke="#7f7b68" stroke-width="1"/>
<circle cx="758.52" cy="658.30" r="5.9" fill="none" stroke="#f6eccc" stroke-width="3.2"/>
<circle cx="780.94" cy="658.30" r="9.3" fill="none" stroke="#7f7b68" stroke-width="1"/>
<circle cx="780.94" cy="658.30" r="5.9" fill="none" stroke="#f6eccc" stroke-width="3.2"/>
<circle cx="825.90" cy="658.30" r="9.3" fill="none" stroke="#7f7b68" stroke-width="1"/>
<circle cx="825.90" cy="658.30" r="5.9" fill="none" stroke="#f6eccc" stroke-width="3.2"/>
<circle cx="848.32" cy="658.30" r="9.3" fill="none" stroke="#7f7b68" stroke-width="1"/>
<circle cx="848.32" cy="658.30" r="5.9" fill="none" stroke="#f6eccc" stroke-width="3.2"/>
<circle cx="870.74" cy="658.30" r="9.3" fill="none" stroke="#7f7b68" stroke-width="1"/>
<circle cx="870.74" cy="658.30" r="5.9" fill="none" stroke="#f6eccc" stroke-width="3.2"/>
<circle cx="893.16" cy="658.30" r="9.3" fill="none" stroke="#7f7b68" stroke-width="1"/>
<circle cx="893.16" cy="658.30" r="5.9" fill="none" stroke="#f6eccc" stroke-width="3.2"/>
<circle cx="915.58" cy="658.30" r="9.3" fill="none" stroke="#7f7b68" stroke-width="1"/>
<circle cx="915.58" cy="658.30" r="5.9" fill="none" stroke="#f6eccc" stroke-width="3.2"/>
<circle cx="938.00" cy="658.30" r="9.3" fill="none" stroke="#7f7b68" stroke-width="1"/>
<circle cx="938.00" cy="658.30" r="5.9" fill="none" stroke="#f6eccc" stroke-width="3.2"/>
<circle cx="939.00" cy="412.00" r="9.3" fill="none" stroke="#7f7b68" stroke-width="1"/>
<circle cx="939.00" cy="412.00" r="5.9" fill="none" stroke="#f6eccc" stroke-width="3.2"/>
<circle cx="961.42" cy="412.00" r="9.3" fill="none" stroke="#7f7b68" stroke-width="1"/>
<circle cx="961.42" cy="412.00" r="5.9" fill="none" stroke="#f6eccc" stroke-width="3.2"/>
<circle cx="939.00" cy="434.42" r="9.3" fill="none" stroke="#7f7b68" stroke-width="1"/>
<circle cx="939.00" cy="434.42" r="5.9" fill="none" stroke="#f6eccc" stroke-width="3.2"/>
<circle cx="961.42" cy="434.42" r="9.3" fill="none" stroke="#7f7b68" stroke-width="1"/>
<circle cx="961.42" cy="434.42" r="5.9" fill="none" stroke="#f6eccc" stroke-width="3.2"/>
<circle cx="939.00" cy="456.84" r="9.3" fill="none" stroke="#7f7b68" stroke-width="1"/>
<circle cx="939.00" cy="456.84" r="5.9" fill="none" stroke="#f6eccc" stroke-width="3.2"/>
<circle cx="961.42" cy="456.84" r="9.3" fill="none" stroke="#7f7b68" stroke-width="1"/>
<circle cx="961.42" cy="456.84" r="5.9" fill="none" stroke="#f6eccc" stroke-width="3.2"/>
<rect x="320.75" y="692.25" width="30" height="17.3" fill="none" stroke="#e8e8e8" stroke-width="1"/>
<path d="M342.75 692.25 H350.75 V709.5500000000001 H342.75" fill="none" stroke="#9a48a8" stroke-width="1"/>
<rect x="322.25" y="693.6" width="27" height="14.5" rx="2" fill="none" stroke="#2a2028" stroke-width="1.2"/>
<rect x="323.55" y="694.9" width="8.4" height="12" rx="2" fill="#e68c87"/>
<rect x="340.0" y="694.9" width="8.5" height="12" rx="2" fill="#e68c87"/>
<path d="M333.15 694.85 V706.85 M338.35 694.85 V706.85" stroke="#9a9496" stroke-width="1.1" stroke-dasharray="1.6 0.8"/>
<path d="M332.15 695.25 H339.35 M332.15 706.45 H339.35 M332.15 700.85 H339.35" stroke="#c8c0c4" stroke-width="0.8"/>
<path d="M325.75 700.85 H328.75 M342.75 700.85 H345.75" stroke="#f3c2bf" stroke-width="0.8"/>
<line x1="335.75" y1="685.85" x2="335.75" y2="715.85" stroke="#a82cb8" stroke-width="0.9"/>
<rect x="360.25" y="692.25" width="30" height="17.3" fill="none" stroke="#e8e8e8" stroke-width="1"/>
<path d="M382.25 692.25 H390.25 V709.5500000000001 H382.25" fill="none" stroke="#9a48a8" stroke-width="1"/>
<rect x="361.75" y="693.6" width="27" height="14.5" rx="2" fill="none" stroke="#2a2028" stroke-width="1.2"/>
<rect x="363.05" y="694.9" width="8.4" height="12" rx="2" fill="#e68c87"/>
<rect x="379.5" y="694.9" width="8.5" height="12" rx="2" fill="#e68c87"/>
<path d="M372.65 694.85 V706.85 M377.85 694.85 V706.85" stroke="#9a9496" stroke-width="1.1" stroke-dasharray="1.6 0.8"/>
<path d="M371.65 695.25 H378.85 M371.65 706.45 H378.85 M371.65 700.85 H378.85" stroke="#c8c0c4" stroke-width="0.8"/>
<path d="M365.25 700.85 H368.25 M382.25 700.85 H385.25" stroke="#f3c2bf" stroke-width="0.8"/>
<line x1="375.25" y1="685.85" x2="375.25" y2="715.85" stroke="#a82cb8" stroke-width="0.9"/>
<rect x="399.65" y="692.25" width="30" height="17.3" fill="none" stroke="#e8e8e8" stroke-width="1"/>
<path d="M421.65 692.25 H429.65 V709.5500000000001 H421.65" fill="none" stroke="#9a48a8" stroke-width="1"/>
<rect x="401.15" y="693.6" width="27" height="14.5" rx="2" fill="none" stroke="#2a2028" stroke-width="1.2"/>
<rect x="402.45" y="694.9" width="8.4" height="12" rx="2" fill="#e68c87"/>
<rect x="418.9" y="694.9" width="8.5" height="12" rx="2" fill="#e68c87"/>
<path d="M412.04999999999995 694.85 V706.85 M417.25 694.85 V706.85" stroke="#9a9496" stroke-width="1.1" stroke-dasharray="1.6 0.8"/>
<path d="M411.04999999999995 695.25 H418.25 M411.04999999999995 706.45 H418.25 M411.04999999999995 700.85 H418.25" stroke="#c8c0c4" stroke-width="0.8"/>
<path d="M404.65 700.85 H407.65 M421.65 700.85 H424.65" stroke="#f3c2bf" stroke-width="0.8"/>
<line x1="414.65" y1="685.85" x2="414.65" y2="715.85" stroke="#a82cb8" stroke-width="0.9"/>
<rect x="320.75" y="719.35" width="30" height="17.3" fill="none" stroke="#e8e8e8" stroke-width="1"/>
<path d="M342.75 719.35 H350.75 V736.6500000000001 H342.75" fill="none" stroke="#9a48a8" stroke-width="1"/>
<rect x="322.25" y="720.7" width="27" height="14.5" rx="2" fill="none" stroke="#2a2028" stroke-width="1.2"/>
<rect x="323.55" y="722.0" width="8.4" height="12" rx="2" fill="#e68c87"/>
<rect x="340.0" y="722.0" width="8.5" height="12" rx="2" fill="#e68c87"/>
<path d="M333.15 721.95 V733.95 M338.35 721.95 V733.95" stroke="#9a9496" stroke-width="1.1" stroke-dasharray="1.6 0.8"/>
<path d="M332.15 722.35 H339.35 M332.15 733.5500000000001 H339.35 M332.15 727.95 H339.35" stroke="#c8c0c4" stroke-width="0.8"/>
<path d="M325.75 727.95 H328.75 M342.75 727.95 H345.75" stroke="#f3c2bf" stroke-width="0.8"/>
<line x1="335.75" y1="712.95" x2="335.75" y2="742.95" stroke="#a82cb8" stroke-width="0.9"/>
<rect x="360.25" y="719.35" width="30" height="17.3" fill="none" stroke="#e8e8e8" stroke-width="1"/>
<path d="M382.25 719.35 H390.25 V736.6500000000001 H382.25" fill="none" stroke="#9a48a8" stroke-width="1"/>
<rect x="361.75" y="720.7" width="27" height="14.5" rx="2" fill="none" stroke="#2a2028" stroke-width="1.2"/>
<rect x="363.05" y="722.0" width="8.4" height="12" rx="2" fill="#e68c87"/>
<rect x="379.5" y="722.0" width="8.5" height="12" rx="2" fill="#e68c87"/>
<path d="M372.65 721.95 V733.95 M377.85 721.95 V733.95" stroke="#9a9496" stroke-width="1.1" stroke-dasharray="1.6 0.8"/>
<path d="M371.65 722.35 H378.85 M371.65 733.5500000000001 H378.85 M371.65 727.95 H378.85" stroke="#c8c0c4" stroke-width="0.8"/>
<path d="M365.25 727.95 H368.25 M382.25 727.95 H385.25" stroke="#f3c2bf" stroke-width="0.8"/>
<line x1="375.25" y1="712.95" x2="375.25" y2="742.95" stroke="#a82cb8" stroke-width="0.9"/>
<rect x="320.75" y="746.35" width="30" height="17.3" fill="none" stroke="#e8e8e8" stroke-width="1"/>
<path d="M342.75 746.35 H350.75 V763.6500000000001 H342.75" fill="none" stroke="#9a48a8" stroke-width="1"/>
<rect x="322.25" y="747.7" width="27" height="14.5" rx="2" fill="none" stroke="#2a2028" stroke-width="1.2"/>
<rect x="323.55" y="749.0" width="8.4" height="12" rx="2" fill="#e68c87"/>
<rect x="340.0" y="749.0" width="8.5" height="12" rx="2" fill="#e68c87"/>
<path d="M333.15 748.95 V760.95 M338.35 748.95 V760.95" stroke="#9a9496" stroke-width="1.1" stroke-dasharray="1.6 0.8"/>
<path d="M332.15 749.35 H339.35 M332.15 760.5500000000001 H339.35 M332.15 754.95 H339.35" stroke="#c8c0c4" stroke-width="0.8"/>
<path d="M325.75 754.95 H328.75 M342.75 754.95 H345.75" stroke="#f3c2bf" stroke-width="0.8"/>
<line x1="335.75" y1="739.95" x2="335.75" y2="769.95" stroke="#a82cb8" stroke-width="0.9"/>
<rect x="992.7" y="209.4" width="30" height="17.3" fill="none" stroke="#e8e8e8" stroke-width="1"/>
<path d="M1014.7 209.4 H1022.7 V226.7 H1014.7" fill="none" stroke="#9a48a8" stroke-width="1"/>
<rect x="994.2" y="210.75" width="27" height="14.5" rx="2" fill="none" stroke="#2a2028" stroke-width="1.2"/>
<rect x="995.5" y="212.05" width="8.4" height="12" rx="2" fill="#e68c87"/>
<rect x="1011.95" y="212.05" width="8.5" height="12" rx="2" fill="#e68c87"/>
<path d="M1005.1 212.0 V224.0 M1010.3000000000001 212.0 V224.0" stroke="#9a9496" stroke-width="1.1" stroke-dasharray="1.6 0.8"/>
<path d="M1004.1 212.4 H1011.3000000000001 M1004.1 223.6 H1011.3000000000001 M1004.1 218.0 H1011.3000000000001" stroke="#c8c0c4" stroke-width="0.8"/>
<path d="M997.7 218.0 H1000.7 M1014.7 218.0 H1017.7" stroke="#f3c2bf" stroke-width="0.8"/>
<line x1="1007.7" y1="203.0" x2="1007.7" y2="233.0" stroke="#a82cb8" stroke-width="0.9"/>
<rect x="992.7" y="236.55" width="30" height="17.3" fill="none" stroke="#e8e8e8" stroke-width="1"/>
<path d="M1014.7 236.55 H1022.7 V253.85 H1014.7" fill="none" stroke="#9a48a8" stroke-width="1"/>
<rect x="994.2" y="237.9" width="27" height="14.5" rx="2" fill="none" stroke="#2a2028" stroke-width="1.2"/>
<rect x="995.5" y="239.20000000000002" width="8.4" height="12" rx="2" fill="#e68c87"/>
<rect x="1011.95" y="239.20000000000002" width="8.5" height="12" rx="2" fill="#e68c87"/>
<path d="M1005.1 239.15 V251.15 M1010.3000000000001 239.15 V251.15" stroke="#9a9496" stroke-width="1.1" stroke-dasharray="1.6 0.8"/>
<path d="M1004.1 239.55 H1011.3000000000001 M1004.1 250.75 H1011.3000000000001 M1004.1 245.15 H1011.3000000000001" stroke="#c8c0c4" stroke-width="0.8"/>
<path d="M997.7 245.15 H1000.7 M1014.7 245.15 H1017.7" stroke="#f3c2bf" stroke-width="0.8"/>
<line x1="1007.7" y1="230.15" x2="1007.7" y2="260.15" stroke="#a82cb8" stroke-width="0.9"/>
<rect x="438.40000000000003" y="691.85" width="13.4" height="6.8" rx="2" fill="none" stroke="#b84ec0" stroke-width="0.9"/>
<rect x="439.6" y="693.05" width="11" height="4.4" rx="1" fill="#e68c87"/>
<line x1="445.1" y1="686.25" x2="445.1" y2="702.25" stroke="#a82cb8" stroke-width="0.9"/>
<rect x="398.90000000000003" y="718.6" width="13.4" height="6.8" rx="2" fill="none" stroke="#b84ec0" stroke-width="0.9"/>
<rect x="400.1" y="719.8" width="11" height="4.4" rx="1" fill="#e68c87"/>
<line x1="405.6" y1="713" x2="405.6" y2="729" stroke="#a82cb8" stroke-width="0.9"/>
<rect x="420.3" y="718.6" width="13.4" height="6.8" rx="2" fill="none" stroke="#b84ec0" stroke-width="0.9"/>
<rect x="421.5" y="719.8" width="11" height="4.4" rx="1" fill="#e68c87"/>
<line x1="427" y1="713" x2="427" y2="729" stroke="#a82cb8" stroke-width="0.9"/>
<rect x="359.3" y="745.2" width="13.4" height="6.8" rx="2" fill="none" stroke="#b84ec0" stroke-width="0.9"/>
<rect x="360.5" y="746.4" width="11" height="4.4" rx="1" fill="#e68c87"/>
<line x1="366" y1="739.6" x2="366" y2="755.6" stroke="#a82cb8" stroke-width="0.9"/>
<rect x="381.3" y="745.2" width="13.4" height="6.8" rx="2" fill="none" stroke="#b84ec0" stroke-width="0.9"/>
<rect x="382.5" y="746.4" width="11" height="4.4" rx="1" fill="#e68c87"/>
<line x1="388" y1="739.6" x2="388" y2="755.6" stroke="#a82cb8" stroke-width="0.9"/>
<rect x="359.3" y="761.0" width="13.4" height="6.8" rx="2" fill="none" stroke="#b84ec0" stroke-width="0.9"/>
<rect x="360.5" y="762.1999999999999" width="11" height="4.4" rx="1" fill="#e68c87"/>
<line x1="366" y1="755.4" x2="366" y2="771.4" stroke="#a82cb8" stroke-width="0.9"/>
<rect x="1031.8" y="209.2" width="13.4" height="6.8" rx="2" fill="none" stroke="#b84ec0" stroke-width="0.9"/>
<rect x="1033.0" y="210.4" width="11" height="4.4" rx="1" fill="#e68c87"/>
<line x1="1038.5" y1="203.6" x2="1038.5" y2="219.6" stroke="#a82cb8" stroke-width="0.9"/>
<rect x="992.1999999999999" y="263.20000000000005" width="13.4" height="6.8" rx="2" fill="none" stroke="#b84ec0" stroke-width="0.9"/>
<rect x="993.4" y="264.40000000000003" width="11" height="4.4" rx="1" fill="#e68c87"/>
<line x1="998.9" y1="257.6" x2="998.9" y2="273.6" stroke="#a82cb8" stroke-width="0.9"/>
<text x="335.75" y="691.15" font-size="14.13" fill="#e2e2e2" stroke="#e2e2e2" stroke-width="0.35" text-anchor="middle" textLength="14.8" lengthAdjust="spacingAndGlyphs">D5</text>
<text x="335.75" y="720.60" font-size="14.13" fill="#e2e2e2" stroke="#e2e2e2" stroke-width="0.35" text-anchor="middle" textLength="22" lengthAdjust="spacingAndGlyphs">LED</text>
<text x="375.25" y="691.15" font-size="14.13" fill="#e2e2e2" stroke="#e2e2e2" stroke-width="0.35" text-anchor="middle" textLength="14.8" lengthAdjust="spacingAndGlyphs">D4</text>
<text x="375.25" y="720.60" font-size="14.13" fill="#e2e2e2" stroke="#e2e2e2" stroke-width="0.35" text-anchor="middle" textLength="22" lengthAdjust="spacingAndGlyphs">LED</text>
<text x="414.65" y="691.15" font-size="14.13" fill="#e2e2e2" stroke="#e2e2e2" stroke-width="0.35" text-anchor="middle" textLength="14.8" lengthAdjust="spacingAndGlyphs">D8</text>
<text x="414.65" y="720.60" font-size="14.13" fill="#e2e2e2" stroke="#e2e2e2" stroke-width="0.35" text-anchor="middle" textLength="22" lengthAdjust="spacingAndGlyphs">LED</text>
<text x="335.75" y="718.25" font-size="14.13" fill="#e2e2e2" stroke="#e2e2e2" stroke-width="0.35" text-anchor="middle" textLength="14.8" lengthAdjust="spacingAndGlyphs">D6</text>
<text x="335.75" y="747.70" font-size="14.13" fill="#e2e2e2" stroke="#e2e2e2" stroke-width="0.35" text-anchor="middle" textLength="22" lengthAdjust="spacingAndGlyphs">LED</text>
<text x="375.25" y="718.25" font-size="14.13" fill="#e2e2e2" stroke="#e2e2e2" stroke-width="0.35" text-anchor="middle" textLength="14.8" lengthAdjust="spacingAndGlyphs">D2</text>
<text x="375.25" y="747.70" font-size="14.13" fill="#e2e2e2" stroke="#e2e2e2" stroke-width="0.35" text-anchor="middle" textLength="22" lengthAdjust="spacingAndGlyphs">LED</text>
<text x="335.75" y="745.25" font-size="14.13" fill="#e2e2e2" stroke="#e2e2e2" stroke-width="0.35" text-anchor="middle" textLength="14.8" lengthAdjust="spacingAndGlyphs">D1</text>
<text x="335.75" y="774.70" font-size="14.13" fill="#e2e2e2" stroke="#e2e2e2" stroke-width="0.35" text-anchor="middle" textLength="22" lengthAdjust="spacingAndGlyphs">LED</text>
<text x="1007.7" y="208.30" font-size="14.13" fill="#e2e2e2" stroke="#e2e2e2" stroke-width="0.35" text-anchor="middle" textLength="14.8" lengthAdjust="spacingAndGlyphs">D3</text>
<text x="1007.7" y="237.75" font-size="14.13" fill="#e2e2e2" stroke="#e2e2e2" stroke-width="0.35" text-anchor="middle" textLength="22" lengthAdjust="spacingAndGlyphs">LED</text>
<text x="1007.7" y="235.45" font-size="14.13" fill="#e2e2e2" stroke="#e2e2e2" stroke-width="0.35" text-anchor="middle" textLength="14.8" lengthAdjust="spacingAndGlyphs">D7</text>
<text x="1007.7" y="264.90" font-size="14.13" fill="#e2e2e2" stroke="#e2e2e2" stroke-width="0.35" text-anchor="middle" textLength="22" lengthAdjust="spacingAndGlyphs">LED</text>
<text x="445.1" y="691.60" font-size="14.13" fill="#e2e2e2" stroke="#e2e2e2" stroke-width="0.35" text-anchor="middle" textLength="14.8" lengthAdjust="spacingAndGlyphs">R1</text>
<text x="445.1" y="708.80" font-size="14.13" fill="#e2e2e2" stroke="#e2e2e2" stroke-width="0.35" text-anchor="middle" textLength="7.5" lengthAdjust="spacingAndGlyphs">R</text>
<text x="405.6" y="718.35" font-size="14.13" fill="#e2e2e2" stroke="#e2e2e2" stroke-width="0.35" text-anchor="middle" textLength="14.8" lengthAdjust="spacingAndGlyphs">R8</text>
<text x="405.6" y="735.55" font-size="14.13" fill="#e2e2e2" stroke="#e2e2e2" stroke-width="0.35" text-anchor="middle" textLength="7.5" lengthAdjust="spacingAndGlyphs">R</text>
<text x="427" y="718.35" font-size="14.13" fill="#e2e2e2" stroke="#e2e2e2" stroke-width="0.35" text-anchor="middle" textLength="14.8" lengthAdjust="spacingAndGlyphs">R7</text>
<text x="427" y="735.55" font-size="14.13" fill="#e2e2e2" stroke="#e2e2e2" stroke-width="0.35" text-anchor="middle" textLength="7.5" lengthAdjust="spacingAndGlyphs">R</text>
<text x="366" y="744.95" font-size="14.13" fill="#e2e2e2" stroke="#e2e2e2" stroke-width="0.35" text-anchor="middle" textLength="14.8" lengthAdjust="spacingAndGlyphs">R3</text>
<text x="366" y="762.15" font-size="14.13" fill="#e2e2e2" stroke="#e2e2e2" stroke-width="0.35" text-anchor="middle" textLength="7.5" lengthAdjust="spacingAndGlyphs">R</text>
<text x="388" y="744.95" font-size="14.13" fill="#e2e2e2" stroke="#e2e2e2" stroke-width="0.35" text-anchor="middle" textLength="14.8" lengthAdjust="spacingAndGlyphs">R5</text>
<text x="388" y="762.15" font-size="14.13" fill="#e2e2e2" stroke="#e2e2e2" stroke-width="0.35" text-anchor="middle" textLength="7.5" lengthAdjust="spacingAndGlyphs">R</text>
<text x="366" y="760.75" font-size="14.13" fill="#e2e2e2" stroke="#e2e2e2" stroke-width="0.35" text-anchor="middle" textLength="14.8" lengthAdjust="spacingAndGlyphs">R4</text>
<text x="366" y="777.95" font-size="14.13" fill="#e2e2e2" stroke="#e2e2e2" stroke-width="0.35" text-anchor="middle" textLength="7.5" lengthAdjust="spacingAndGlyphs">R</text>
<text x="1038.5" y="208.95" font-size="14.13" fill="#e2e2e2" stroke="#e2e2e2" stroke-width="0.35" text-anchor="middle" textLength="14.8" lengthAdjust="spacingAndGlyphs">R2</text>
<text x="1038.5" y="226.15" font-size="14.13" fill="#e2e2e2" stroke="#e2e2e2" stroke-width="0.35" text-anchor="middle" textLength="7.5" lengthAdjust="spacingAndGlyphs">R</text>
<text x="998.9" y="262.95" font-size="14.13" fill="#e2e2e2" stroke="#e2e2e2" stroke-width="0.35" text-anchor="middle" textLength="14.8" lengthAdjust="spacingAndGlyphs">R6</text>
<text x="998.9" y="280.15" font-size="14.13" fill="#e2e2e2" stroke="#e2e2e2" stroke-width="0.35" text-anchor="middle" textLength="7.5" lengthAdjust="spacingAndGlyphs">R</text>
<text x="399.4" y="205.75" font-size="14.40" fill="#e2e2e2" stroke="#e2e2e2" stroke-width="0.35" text-anchor="middle" textLength="22.7" lengthAdjust="spacingAndGlyphs">XA1</text>
<text x="514.1" y="205.75" font-size="14.40" fill="#e2e2e2" stroke="#e2e2e2" stroke-width="0.35" text-anchor="middle" textLength="128" lengthAdjust="spacingAndGlyphs">Arduino_Uno_Shield</text>
</svg>
<div class="a" style="left:86px;top:799px;width:1174px;height:14px;background:#141414"></div>
<div class="a" style="left:731px;top:802px;width:41px;height:8px;border-radius:4px;background:#8e8e8e"></div>
<div class="a" style="left:1260px;top:128px;width:13px;height:671px;background:#141414"></div>
<div class="a" style="left:1263px;top:483px;width:7px;height:18px;border-radius:3.5px;background:#8e8e8e"></div>
<div class="a" style="left:1260px;top:799px;width:13px;height:14px;background:#000"></div>
<div class="a" style="left:1273px;top:128px;width:39px;height:685px;background:#323232"></div>
<div class="hl" style="left:1275.5px;top:131px;width:28px;height:28px"></div>
<svg class="a" style="left:1277.5px;top:133.0px" width="24" height="24" viewBox="0 0 24 24"><path d="M8 4 L18 13.5 L13.5 14 L16 19.5 L13.8 20.5 L11.3 15 L8 18 Z" fill="#e2d9e2"/></svg>
<svg class="a" style="left:1277.5px;top:164.0px" width="24" height="24" viewBox="0 0 24 24"><path d="M1.5 1.5 L22.5 21 M22.5 1.5 L1.5 21" stroke="#bbb" stroke-width="1.3"/><circle cx="12" cy="11.3" r="2.8" fill="#fff"/></svg>
<div class="hsep" style="left:1280px;top:194.9px;width:20px"></div>
<svg class="a" style="left:1277.5px;top:202.8px" width="24" height="24" viewBox="0 0 24 24"><path d="M1 5 H23 V19.5 H1 V14 Q3.5 12.3 1 10.5 Z" fill="none" stroke="#aaa" stroke-width="1.1"/><rect x="4" y="1" width="5" height="6.5" fill="#4eb2ea"/><rect x="9.5" y="1" width="5" height="6.5" fill="#4eb2ea"/><rect x="15" y="1" width="5" height="6.5" fill="#4eb2ea"/><rect x="4" y="16.5" width="5" height="6.5" fill="#4eb2ea"/><rect x="9.5" y="16.5" width="5" height="6.5" fill="#4eb2ea"/><rect x="15" y="16.5" width="5" height="6.5" fill="#4eb2ea"/></svg>
<svg class="a" style="left:1277.5px;top:233.0px" width="24" height="24" viewBox="0 0 24 24"><path d="M3 20 L8 10.5 H15.5 L21 1.5" fill="none" stroke="#4eb2ea" stroke-width="1.8"/><path d="M17 22 L22 17 V22 Z" fill="#eee"/></svg>
<svg class="a" style="left:1277.5px;top:264.0px" width="24" height="24" viewBox="0 0 24 24"><path d="M2 11 Q4 13 6 11 V4 Q6 2 8 2 Q10 2 10 4 V11 Q10 13 12 13 Q14 13 14 11 V4 Q14 2 16 2 Q18 2 18 4 V10 Q18 12 22 12" fill="none" stroke="#4eb2ea" stroke-width="1.8"/><path d="M17 22 L22 17 V22 Z" fill="#eee"/></svg>
<svg class="a" style="left:1277.5px;top:293.4px" width="24" height="24" viewBox="0 0 24 24"><circle cx="12" cy="12" r="5.2" fill="none" stroke="#f0a030" stroke-width="3.2"/><circle cx="12" cy="12" r="2.2" fill="#ddd"/></svg>
<svg class="a" style="left:1277.5px;top:323.4px" width="24" height="24" viewBox="0 0 24 24"><path d="M2 22 V11.5 H7 V3 H21 V9 A2.8 2.8 0 0 0 21 15 V22 Z" fill="#52aee6"/><circle cx="16.5" cy="12" r="1.9" fill="#eee"/><path d="M16.5 12 H22" stroke="#eee" stroke-width="1.2"/></svg>
<svg class="a" style="left:1277.5px;top:353.3px" width="24" height="24" viewBox="0 0 24 24"><defs><pattern id="hatch" width="4" height="4" patternUnits="userSpaceOnUse" patternTransform="rotate(45)"><rect width="2" height="4" fill="#e2d9e2"/></pattern></defs><path d="M2 22 V14 H8 V4 H21 V22 Z" fill="url(#hatch)" stroke="#e2d9e2" stroke-width="1.2"/></svg>
<div class="hsep" style="left:1280px;top:384.7px;width:20px"></div>
<svg class="a" style="left:1277.5px;top:392.0px" width="24" height="24" viewBox="0 0 24 24"><path d="M3 20.5 L21 3.5" stroke="#e2d9e2" stroke-width="1.8" stroke-linecap="round"/></svg>
<svg class="a" style="left:1277.5px;top:423.0px" width="24" height="24" viewBox="0 0 24 24"><path d="M3.5 21 A17 17 0 0 1 20.5 3.5" fill="none" stroke="#e2d9e2" stroke-width="1.8" stroke-linecap="round"/></svg>
<svg class="a" style="left:1277.5px;top:453.0px" width="24" height="24" viewBox="0 0 24 24"><rect x="3" y="3" width="18" height="17" fill="#989898" stroke="#e2d9e2" stroke-width="1.6"/></svg>
<svg class="a" style="left:1277.5px;top:483.0px" width="24" height="24" viewBox="0 0 24 24"><circle cx="12" cy="12" r="9" fill="#989898" stroke="#e2d9e2" stroke-width="1.6"/></svg>
<svg class="a" style="left:1277.5px;top:513.5px" width="24" height="24" viewBox="0 0 24 24"><path d="M2.5 3.5 L20.5 7 V20 L4 22 L10.5 12 Z" fill="#989898" stroke="#e2d9e2" stroke-width="1.5" stroke-linejoin="round"/></svg>
<svg class="a" style="left:1277.5px;top:544.0px" width="24" height="24" viewBox="0 0 24 24"><path d="M3 3 H21 V7.5 H14.5 V21.5 H9.5 V7.5 H3 Z" fill="#e2d9e2"/></svg>
<svg class="a" style="left:1277.5px;top:574.0px" width="24" height="24" viewBox="0 0 24 24"><path d="M2.5 17 L6 20 M17.5 3 L21 6 M4.5 18.5 L19.5 4.5" stroke="#e2d9e2" stroke-width="0.9"/><circle cx="20" cy="8" r="2.2" fill="#4eb2ea"/><circle cx="5.5" cy="21" r="2.2" fill="#4eb2ea"/><path d="M17 22 L22 17 V22 Z" fill="#eee"/></svg>
<svg class="a" style="left:1277.5px;top:604.5px" width="24" height="24" viewBox="0 0 24 24"><circle cx="12" cy="12" r="8.5" fill="#777"/><path d="M12 12 V3.5 A8.5 8.5 0 0 1 20.5 12 Z M12 12 V20.5 A8.5 8.5 0 0 1 3.5 12 Z" fill="#888"/><path d="M12 1.5 V22.5 M1.5 12 H22.5" stroke="#e2d9e2" stroke-width="1.8"/></svg>
<svg class="a" style="left:1277.5px;top:635.0px" width="24" height="24" viewBox="0 0 24 24"><path d="M4 3 L14.5 12.5 L10.5 13 L12.5 17.5 L10.5 18.5 L8.5 14 L4 17 Z" fill="#e2d9e2"/><circle cx="16" cy="17" r="5.8" fill="#e0566c"/><path d="M13.8 14.8 L18.2 19.2 M18.2 14.8 L13.8 19.2" stroke="#fff" stroke-width="1.6"/></svg>
<div class="hsep" style="left:1280px;top:665.0px;width:20px"></div>
<svg class="a" style="left:1277.5px;top:672.0px" width="24" height="24" viewBox="0 0 24 24"><path d="M3 22 V3 M1.5 5 L3 2 L4.5 5 M3 21 H20 M18 19.5 L21 21 L18 22.5" fill="none" stroke="#e2d9e2" stroke-width="1"/><circle cx="12" cy="10" r="5" fill="#666"/><path d="M12 3 V17 M5 10 H19" stroke="#e2d9e2" stroke-width="1.8"/><path d="M17 22 L22 17 V22 Z" fill="#eee"/></svg>
<svg class="a" style="left:1277.5px;top:703.6px" width="24" height="24" viewBox="0 0 24 24"><g transform="rotate(-40 12 12)"><rect x="1.5" y="8" width="21" height="8" rx="1" fill="none" stroke="#e2d9e2" stroke-width="1.8"/><path d="M6 8 V11.5 M10 8 V12.5 M14 8 V11.5 M18 8 V12.5" stroke="#e2d9e2" stroke-width="1.1"/></g></svg>
<div class="a" style="left:1312px;top:127px;width:171px;height:15.5px;background:#1f1f1f"></div>
<div class="t" style="left:1316px;top:129px;font-size:10.9px;color:#e0e0e0">Appearance</div>
<div class="a" style="left:1313px;top:142px;width:1px;height:537px;background:#454545"></div>
<div class="a" style="left:1319.5px;top:167px;width:156.5px;height:467px;border:1px solid #444;border-radius:6px;background:#363636"></div>
<div class="a" style="left:1322px;top:156.5px;width:155px;height:19.5px;border-radius:5px;background:#3b3b3b;border:1px solid #474747"></div>
<div class="a" style="left:1322.4px;top:157px;width:53.5px;height:18.7px;border-radius:5px;background:#6a6a6a"></div>
<div class="t" style="left:1333.5px;top:160.5px;font-size:11px;font-weight:bold;color:#ececec">Layers</div>
<div class="t" style="left:1387.5px;top:160.5px;font-size:11px;font-weight:bold;color:#ececec">Obje...</div>
<div class="sep" style="left:1431px;top:160px;height:13px;background:#555"></div>
<div class="t" style="left:1441.5px;top:160.5px;font-size:11px;font-weight:bold;color:#ececec">Nets</div>
<div class="a" style="left:1321.8px;top:181.3px;width:137.5px;height:430px;background:#383838"></div>
<div class="a" style="left:1321.8px;top:181.5px;width:137.5px;height:17px;background:#4a4a4a"></div>
<svg class="a" style="left:1327px;top:185px" width="8" height="11" viewBox="0 0 8 11"><path d="M1 0.5 L7 5.5 L1 10.5 Z" fill="#3b3bf0"/></svg>
<div class="a" style="left:1459px;top:181px;width:15px;height:430px;background:#2c2c2c"></div>
<div class="a" style="left:1463px;top:184px;width:8px;height:356px;border-radius:4px;background:#8a8a8a"></div>
<div class="sw" style="top:185.2px;background:#c83434"></div>
<div class="a" style="left:1359.5px;top:183.2px;width:15px;height:15px;border-radius:7.5px;background:#333"></div><svg class="a" style="left:1360px;top:185.7px" width="14" height="10" viewBox="0 0 14 10"><path d="M1 5 Q7 -1 13 5 Q7 11 1 5 Z" fill="none" stroke="#d8d0d8" stroke-width="1.3"/><circle cx="7" cy="5" r="2" fill="#d8d0d8"/></svg>
<div class="ln" style="top:186px">F.Cu</div>
<div class="sw" style="top:202.2px;background:#4d7fc4"></div>
<div class="a" style="left:1359.5px;top:200.2px;width:15px;height:15px;border-radius:7.5px;background:#333"></div><svg class="a" style="left:1360px;top:202.7px" width="14" height="10" viewBox="0 0 14 10"><path d="M1 5 Q7 -1 13 5 Q7 11 1 5 Z" fill="none" stroke="#d8d0d8" stroke-width="1.3"/><circle cx="7" cy="5" r="2" fill="#d8d0d8"/></svg>
<div class="ln" style="top:203px">B.Cu</div>
<div class="sw" style="top:219.2px;background:#841a84"></div>
<div class="a" style="left:1359.5px;top:217.2px;width:15px;height:15px;border-radius:7.5px;background:#333"></div><svg class="a" style="left:1360px;top:219.7px" width="14" height="10" viewBox="0 0 14 10"><path d="M1 5 Q7 -1 13 5 Q7 11 1 5 Z" fill="none" stroke="#d8d0d8" stroke-width="1.3"/><circle cx="7" cy="5" r="2" fill="#d8d0d8"/></svg>
<div class="ln" style="top:220px">F.Adhesive</div>
<div class="sw" style="top:236.2px;background:#000084"></div>
<div class="a" style="left:1359.5px;top:234.2px;width:15px;height:15px;border-radius:7.5px;background:#333"></div><svg class="a" style="left:1360px;top:236.7px" width="14" height="10" viewBox="0 0 14 10"><path d="M1 5 Q7 -1 13 5 Q7 11 1 5 Z" fill="none" stroke="#d8d0d8" stroke-width="1.3"/><circle cx="7" cy="5" r="2" fill="#d8d0d8"/></svg>
<div class="ln" style="top:237px">B.Adhesive</div>
<div class="sw" style="top:253.2px;background:#a59390"></div>
<div class="a" style="left:1359.5px;top:251.2px;width:15px;height:15px;border-radius:7.5px;background:#333"></div><svg class="a" style="left:1360px;top:253.7px" width="14" height="10" viewBox="0 0 14 10"><path d="M1 5 Q7 -1 13 5 Q7 11 1 5 Z" fill="none" stroke="#d8d0d8" stroke-width="1.3"/><circle cx="7" cy="5" r="2" fill="#d8d0d8"/></svg>
<div class="ln" style="top:254px">F.Paste</div>
<div class="sw" style="top:270.2px;background:#3fb0ae"></div>
<div class="a" style="left:1359.5px;top:268.2px;width:15px;height:15px;border-radius:7.5px;background:#333"></div><svg class="a" style="left:1360px;top:270.7px" width="14" height="10" viewBox="0 0 14 10"><path d="M1 5 Q7 -1 13 5 Q7 11 1 5 Z" fill="none" stroke="#d8d0d8" stroke-width="1.3"/><circle cx="7" cy="5" r="2" fill="#d8d0d8"/></svg>
<div class="ln" style="top:271px">B.Paste</div>
<div class="sw" style="top:287.2px;background:#f2eda1"></div>
<div class="a" style="left:1359.5px;top:285.2px;width:15px;height:15px;border-radius:7.5px;background:#333"></div><svg class="a" style="left:1360px;top:287.7px" width="14" height="10" viewBox="0 0 14 10"><path d="M1 5 Q7 -1 13 5 Q7 11 1 5 Z" fill="none" stroke="#d8d0d8" stroke-width="1.3"/><circle cx="7" cy="5" r="2" fill="#d8d0d8"/></svg>
<div class="ln" style="top:288px">F.Silkscreen</div>
<div class="sw" style="top:304.2px;background:#e8b2a7"></div>
<div class="a" style="left:1359.5px;top:302.2px;width:15px;height:15px;border-radius:7.5px;background:#333"></div><svg class="a" style="left:1360px;top:304.7px" width="14" height="10" viewBox="0 0 14 10"><path d="M1 5 Q7 -1 13 5 Q7 11 1 5 Z" fill="none" stroke="#d8d0d8" stroke-width="1.3"/><circle cx="7" cy="5" r="2" fill="#d8d0d8"/></svg>
<div class="ln" style="top:305px">B.Silkscreen</div>
<div class="sw" style="top:321.2px;background:#5e3b8a"></div>
<div class="a" style="left:1359.5px;top:319.2px;width:15px;height:15px;border-radius:7.5px;background:#333"></div><svg class="a" style="left:1360px;top:321.7px" width="14" height="10" viewBox="0 0 14 10"><path d="M1 5 Q7 -1 13 5 Q7 11 1 5 Z" fill="none" stroke="#d8d0d8" stroke-width="1.3"/><circle cx="7" cy="5" r="2" fill="#d8d0d8"/></svg>
<div class="ln" style="top:322px">F.Mask</div>
<div class="sw" style="top:338.2px;background:#2b6b6e"></div>
<div class="a" style="left:1359.5px;top:336.2px;width:15px;height:15px;border-radius:7.5px;background:#333"></div><svg class="a" style="left:1360px;top:338.7px" width="14" height="10" viewBox="0 0 14 10"><path d="M1 5 Q7 -1 13 5 Q7 11 1 5 Z" fill="none" stroke="#d8d0d8" stroke-width="1.3"/><circle cx="7" cy="5" r="2" fill="#d8d0d8"/></svg>
<div class="ln" style="top:339px">B.Mask</div>
<div class="sw" style="top:355.2px;background:#c2c2c2"></div>
<div class="a" style="left:1359.5px;top:353.2px;width:15px;height:15px;border-radius:7.5px;background:#333"></div><svg class="a" style="left:1360px;top:355.7px" width="14" height="10" viewBox="0 0 14 10"><path d="M1 5 Q7 -1 13 5 Q7 11 1 5 Z" fill="none" stroke="#d8d0d8" stroke-width="1.3"/><circle cx="7" cy="5" r="2" fill="#d8d0d8"/></svg>
<div class="ln" style="top:356px">User.Drawings</div>
<div class="sw" style="top:372.2px;background:#5a8edb"></div>
<div class="a" style="left:1359.5px;top:370.2px;width:15px;height:15px;border-radius:7.5px;background:#333"></div><svg class="a" style="left:1360px;top:372.7px" width="14" height="10" viewBox="0 0 14 10"><path d="M1 5 Q7 -1 13 5 Q7 11 1 5 Z" fill="none" stroke="#d8d0d8" stroke-width="1.3"/><circle cx="7" cy="5" r="2" fill="#d8d0d8"/></svg>
<div class="ln" style="top:373px">User.Comments</div>
<div class="sw" style="top:389.2px;background:#b4dbd2"></div>
<div class="a" style="left:1359.5px;top:387.2px;width:15px;height:15px;border-radius:7.5px;background:#333"></div><svg class="a" style="left:1360px;top:389.7px" width="14" height="10" viewBox="0 0 14 10"><path d="M1 5 Q7 -1 13 5 Q7 11 1 5 Z" fill="none" stroke="#d8d0d8" stroke-width="1.3"/><circle cx="7" cy="5" r="2" fill="#d8d0d8"/></svg>
<div class="ln" style="top:390px">User.Eco1</div>
<div class="sw" style="top:406.2px;background:#d8c868"></div>
<div class="a" style="left:1359.5px;top:404.2px;width:15px;height:15px;border-radius:7.5px;background:#333"></div><svg class="a" style="left:1360px;top:406.7px" width="14" height="10" viewBox="0 0 14 10"><path d="M1 5 Q7 -1 13 5 Q7 11 1 5 Z" fill="none" stroke="#d8d0d8" stroke-width="1.3"/><circle cx="7" cy="5" r="2" fill="#d8d0d8"/></svg>
<div class="ln" style="top:407px">User.Eco2</div>
<div class="sw" style="top:423.2px;background:#d0d2cd"></div>
<div class="a" style="left:1359.5px;top:421.2px;width:15px;height:15px;border-radius:7.5px;background:#333"></div><svg class="a" style="left:1360px;top:423.7px" width="14" height="10" viewBox="0 0 14 10"><path d="M1 5 Q7 -1 13 5 Q7 11 1 5 Z" fill="none" stroke="#d8d0d8" stroke-width="1.3"/><circle cx="7" cy="5" r="2" fill="#d8d0d8"/></svg>
<div class="ln" style="top:424px">Edge.Cuts</div>
<div class="sw" style="top:440.2px;background:#ff26e2"></div>
<div class="a" style="left:1359.5px;top:438.2px;width:15px;height:15px;border-radius:7.5px;background:#333"></div><svg class="a" style="left:1360px;top:440.7px" width="14" height="10" viewBox="0 0 14 10"><path d="M1 5 Q7 -1 13 5 Q7 11 1 5 Z" fill="none" stroke="#d8d0d8" stroke-width="1.3"/><circle cx="7" cy="5" r="2" fill="#d8d0d8"/></svg>
<div class="ln" style="top:441px">Margin</div>
<div class="sw" style="top:457.2px;background:#ff26e2"></div>
<div class="a" style="left:1359.5px;top:455.2px;width:15px;height:15px;border-radius:7.5px;background:#333"></div><svg class="a" style="left:1360px;top:457.7px" width="14" height="10" viewBox="0 0 14 10"><path d="M1 5 Q7 -1 13 5 Q7 11 1 5 Z" fill="none" stroke="#d8d0d8" stroke-width="1.3"/><circle cx="7" cy="5" r="2" fill="#d8d0d8"/></svg>
<div class="ln" style="top:458px">F.Courtyard</div>
<div class="sw" style="top:474.2px;background:#26e9ff"></div>
<div class="a" style="left:1359.5px;top:472.2px;width:15px;height:15px;border-radius:7.5px;background:#333"></div><svg class="a" style="left:1360px;top:474.7px" width="14" height="10" viewBox="0 0 14 10"><path d="M1 5 Q7 -1 13 5 Q7 11 1 5 Z" fill="none" stroke="#d8d0d8" stroke-width="1.3"/><circle cx="7" cy="5" r="2" fill="#d8d0d8"/></svg>
<div class="ln" style="top:475px">B.Courtyard</div>
<div class="sw" style="top:491.2px;background:#afafaf"></div>
<div class="a" style="left:1359.5px;top:489.2px;width:15px;height:15px;border-radius:7.5px;background:#333"></div><svg class="a" style="left:1360px;top:491.7px" width="14" height="10" viewBox="0 0 14 10"><path d="M1 5 Q7 -1 13 5 Q7 11 1 5 Z" fill="none" stroke="#d8d0d8" stroke-width="1.3"/><circle cx="7" cy="5" r="2" fill="#d8d0d8"/></svg>
<div class="ln" style="top:492px">F.Fab</div>
<div class="sw" style="top:508.2px;background:#585d84"></div>
<div class="a" style="left:1359.5px;top:506.2px;width:15px;height:15px;border-radius:7.5px;background:#333"></div><svg class="a" style="left:1360px;top:508.7px" width="14" height="10" viewBox="0 0 14 10"><path d="M1 5 Q7 -1 13 5 Q7 11 1 5 Z" fill="none" stroke="#d8d0d8" stroke-width="1.3"/><circle cx="7" cy="5" r="2" fill="#d8d0d8"/></svg>
<div class="ln" style="top:509px">B.Fab</div>
<div class="sw" style="top:525.2px;background:#c2c2c2"></div>
<div class="a" style="left:1359.5px;top:523.2px;width:15px;height:15px;border-radius:7.5px;background:#333"></div><svg class="a" style="left:1360px;top:525.7px" width="14" height="10" viewBox="0 0 14 10"><path d="M1 5 Q7 -1 13 5 Q7 11 1 5 Z" fill="none" stroke="#d8d0d8" stroke-width="1.3"/><circle cx="7" cy="5" r="2" fill="#d8d0d8"/></svg>
<div class="ln" style="top:526px">User.1</div>
<div class="sw" style="top:542.2px;background:#598edb"></div>
<div class="a" style="left:1359.5px;top:540.2px;width:15px;height:15px;border-radius:7.5px;background:#333"></div><svg class="a" style="left:1360px;top:542.7px" width="14" height="10" viewBox="0 0 14 10"><path d="M1 5 Q7 -1 13 5 Q7 11 1 5 Z" fill="none" stroke="#d8d0d8" stroke-width="1.3"/><circle cx="7" cy="5" r="2" fill="#d8d0d8"/></svg>
<div class="ln" style="top:543px">User.2</div>
<div class="sw" style="top:559.2px;background:#b4dbd2"></div>
<div class="a" style="left:1359.5px;top:557.2px;width:15px;height:15px;border-radius:7.5px;background:#333"></div><svg class="a" style="left:1360px;top:559.7px" width="14" height="10" viewBox="0 0 14 10"><path d="M1 5 Q7 -1 13 5 Q7 11 1 5 Z" fill="none" stroke="#d8d0d8" stroke-width="1.3"/><circle cx="7" cy="5" r="2" fill="#d8d0d8"/></svg>
<div class="ln" style="top:560px">User.3</div>
<div class="sw" style="top:576.2px;background:#d8c868"></div>
<div class="a" style="left:1359.5px;top:574.2px;width:15px;height:15px;border-radius:7.5px;background:#333"></div><svg class="a" style="left:1360px;top:576.7px" width="14" height="10" viewBox="0 0 14 10"><path d="M1 5 Q7 -1 13 5 Q7 11 1 5 Z" fill="none" stroke="#d8d0d8" stroke-width="1.3"/><circle cx="7" cy="5" r="2" fill="#d8d0d8"/></svg>
<div class="ln" style="top:577px">User.4</div>
<div class="sw" style="top:593.2px;background:#c2c2c2"></div>
<div class="a" style="left:1359.5px;top:591.2px;width:15px;height:15px;border-radius:7.5px;background:#333"></div><svg class="a" style="left:1360px;top:593.7px" width="14" height="10" viewBox="0 0 14 10"><path d="M1 5 Q7 -1 13 5 Q7 11 1 5 Z" fill="none" stroke="#d8d0d8" stroke-width="1.3"/><circle cx="7" cy="5" r="2" fill="#d8d0d8"/></svg>
<div class="ln" style="top:594px">User.5</div>
<svg class="a" style="left:1328px;top:617px" width="6" height="10" viewBox="0 0 6 10"><path d="M0.5 1 L5 5 L0.5 9 Z" fill="#e0e0e0"/></svg>
<div class="t" style="left:1335px;top:618px;font-size:11.8px;color:#e2e2e2">Layer Display Options</div>
<div class="t" style="left:1322px;top:639px;font-size:11.8px;color:#e2e2e2">Presets (Ctrl+Tab):</div>
<div class="combo" style="left:1320px;top:651px;width:155px"><span style="left:7px">All Layers</span><div class="step"><svg width="16" height="15" viewBox="0 0 16 15"><path d="M5 6 L8 3.2 L11 6 M5 9 L8 11.8 L11 9" fill="none" stroke="#fff" stroke-width="1.5" stroke-linecap="round" stroke-linejoin="round"/></svg></div></div>
<div class="a" style="left:1312px;top:686.5px;width:171px;height:15px;background:#1f1f1f"></div>
<div class="t" style="left:1316px;top:688px;font-size:10.9px;color:#e0e0e0">Selection Filter</div>
<div class="a" style="left:1313px;top:702px;width:1px;height:111px;background:#454545"></div>
<div class="cb" style="left:1320px;top:708.5px"><svg width="13" height="13" viewBox="0 0 13 13"><path d="M3 6.8 L5.5 9.5 L10 3.5" fill="none" stroke="#fff" stroke-width="1.7" stroke-linecap="round" stroke-linejoin="round"/></svg></div>
<div class="cbl" style="left:1339px;top:710.7px">All items</div>
<div class="cb" style="left:1416px;top:708.5px"><svg width="13" height="13" viewBox="0 0 13 13"><path d="M3 6.8 L5.5 9.5 L10 3.5" fill="none" stroke="#fff" stroke-width="1.7" stroke-linecap="round" stroke-linejoin="round"/></svg></div>
<div class="cbl" style="left:1435px;top:710.7px">Locked items</div>
<div class="cb" style="left:1320px;top:725.5px"><svg width="13" height="13" viewBox="0 0 13 13"><path d="M3 6.8 L5.5 9.5 L10 3.5" fill="none" stroke="#fff" stroke-width="1.7" stroke-linecap="round" stroke-linejoin="round"/></svg></div>
<div class="cbl" style="left:1339px;top:727.7px">Footprints</div>
<div class="cb" style="left:1416px;top:725.5px"><svg width="13" height="13" viewBox="0 0 13 13"><path d="M3 6.8 L5.5 9.5 L10 3.5" fill="none" stroke="#fff" stroke-width="1.7" stroke-linecap="round" stroke-linejoin="round"/></svg></div>
<div class="cbl" style="left:1435px;top:727.7px">Text</div>
<div class="cb" style="left:1320px;top:742.5px"><svg width="13" height="13" viewBox="0 0 13 13"><path d="M3 6.8 L5.5 9.5 L10 3.5" fill="none" stroke="#fff" stroke-width="1.7" stroke-linecap="round" stroke-linejoin="round"/></svg></div>
<div class="cbl" style="left:1339px;top:744.7px">Tracks</div>
<div class="cb" style="left:1416px;top:742.5px"><svg width="13" height="13" viewBox="0 0 13 13"><path d="M3 6.8 L5.5 9.5 L10 3.5" fill="none" stroke="#fff" stroke-width="1.7" stroke-linecap="round" stroke-linejoin="round"/></svg></div>
<div class="cbl" style="left:1435px;top:744.7px">Vias</div>
<div class="cb" style="left:1320px;top:759.5px"><svg width="13" height="13" viewBox="0 0 13 13"><path d="M3 6.8 L5.5 9.5 L10 3.5" fill="none" stroke="#fff" stroke-width="1.7" stroke-linecap="round" stroke-linejoin="round"/></svg></div>
<div class="cbl" style="left:1339px;top:761.7px">Pads</div>
<div class="cb" style="left:1416px;top:759.5px"><svg width="13" height="13" viewBox="0 0 13 13"><path d="M3 6.8 L5.5 9.5 L10 3.5" fill="none" stroke="#fff" stroke-width="1.7" stroke-linecap="round" stroke-linejoin="round"/></svg></div>
<div class="cbl" style="left:1435px;top:761.7px">Graphics</div>
<div class="cb" style="left:1320px;top:776.5px"><svg width="13" height="13" viewBox="0 0 13 13"><path d="M3 6.8 L5.5 9.5 L10 3.5" fill="none" stroke="#fff" stroke-width="1.7" stroke-linecap="round" stroke-linejoin="round"/></svg></div>
<div class="cbl" style="left:1339px;top:778.7px">Zones</div>
<div class="cb" style="left:1416px;top:776.5px"><svg width="13" height="13" viewBox="0 0 13 13"><path d="M3 6.8 L5.5 9.5 L10 3.5" fill="none" stroke="#fff" stroke-width="1.7" stroke-linecap="round" stroke-linejoin="round"/></svg></div>
<div class="cbl" style="left:1435px;top:778.7px">Rule Areas</div>
<div class="cb" style="left:1320px;top:793.5px"><svg width="13" height="13" viewBox="0 0 13 13"><path d="M3 6.8 L5.5 9.5 L10 3.5" fill="none" stroke="#fff" stroke-width="1.7" stroke-linecap="round" stroke-linejoin="round"/></svg></div>
<div class="cbl" style="left:1339px;top:795.7px">Dimensions</div>
<div class="cb" style="left:1416px;top:793.5px"><svg width="13" height="13" viewBox="0 0 13 13"><path d="M3 6.8 L5.5 9.5 L10 3.5" fill="none" stroke="#fff" stroke-width="1.7" stroke-linecap="round" stroke-linejoin="round"/></svg></div>
<div class="cbl" style="left:1435px;top:795.7px">Other items</div>
<div class="t" style="left:63px;top:817px;font-size:11px;color:#dedede">Selected Items</div>
<div class="t" style="left:63px;top:831px;font-size:11px;color:#dedede">17</div>
<div class="a" style="left:53px;top:842px;width:1430px;height:1px;background:#1e1e1e"></div>
<div class="a" style="left:53px;top:843px;width:1430px;height:21px;background:#303030"></div>
<div class="st" style="left:542px">Z 2.61</div>
<div class="st" style="left:609px">X 175.2600  Y 48.2600</div>
<div class="st" style="left:757px">dx 175.2600  dy 48.2600  dist 181.7831</div>
<div class="st" style="left:995px">grid X 2.5400  Y 2.5400</div>
<div class="st" style="left:1166px">mm</div>
<div class="st" style="left:1217px">Select item(s)</div>
<div class="a" style="left:53px;top:36px;width:1430px;height:829px;border-radius:10px;border:1px solid #58585c"></div>
</div></body></html>
